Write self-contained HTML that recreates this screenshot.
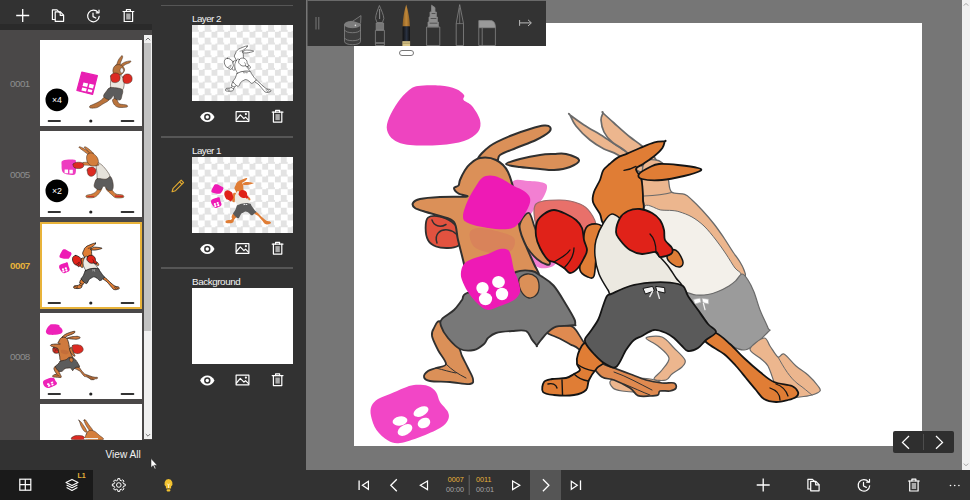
<!DOCTYPE html>
<html><head><meta charset="utf-8"><title>Animation Desk</title>
<style>
html,body{margin:0;padding:0;}
body{width:970px;height:500px;overflow:hidden;position:relative;background:#767676;font-family:"Liberation Sans",sans-serif;color:#fff;}
.abs{position:absolute;}
#topbar{left:0;top:0;width:306px;height:30px;background:#323232;}
#topgap{left:0;top:24px;width:152px;height:6px;background:#2a2a2a;}
#frames{left:0;top:30px;width:152px;height:410px;background:#4a4848;overflow:hidden;}
#layers{left:152px;top:0;width:154px;height:470px;background:#323232;}
#edge{display:none;}
#viewall{left:0;top:440px;width:306px;height:30px;background:#323232;}
#viewall span{position:absolute;left:105.5px;top:449.5px;top:9px;font-size:10.1px;line-height:12px;color:#f2f2f2;white-space:nowrap;}
#bottom{left:0;top:470px;width:970px;height:30px;background:#323232;}
#tabs{left:0;top:470px;width:93px;height:30px;background:#1a1a1a;}
#canvas{left:354px;top:23px;width:568px;height:423px;background:#fff;}
#brushbar{left:307px;top:0;width:239px;height:46px;background:#333;border-top:1px solid #6a6a6a;border-left:1px solid #555;box-sizing:border-box;}
#vscroll{left:962px;top:0;width:8px;height:470px;background:#f0f0f0;}
#artsvg{left:0;top:0;width:970px;height:500px;}
#uisvg{left:0;top:0;width:970px;height:500px;}
.thumb{position:absolute;left:40px;width:101.5px;height:86px;background:#fff;}
.fnum{position:absolute;left:10px;width:30px;font-size:9.8px;line-height:10px;color:#959595;letter-spacing:-0.5px;}
.sep{position:absolute;left:161px;width:132px;height:1.5px;background:#565656;}
.lthumb{position:absolute;left:192px;width:101px;height:75.5px;background:repeating-conic-gradient(#fff 0% 25%,#e3e3e3 0% 50%) 0 0/12.7px 12.7px;}
.llabel{position:absolute;left:192px;font-size:9.8px;line-height:11px;color:#f4f4f4;white-space:nowrap;letter-spacing:-0.55px;}
#fscroll{left:144px;top:35px;width:8px;height:404px;background:#f0f0f0;}
#fscrollthumb{left:144px;top:43px;width:7px;height:288px;background:#c2c2c2;}
#navbox{left:893px;top:431px;width:61px;height:22px;background:#2f2f2f;border-radius:2px;}
#playhl{left:530.4px;top:470px;width:30.4px;height:30px;background:#555;}
.tnum{position:absolute;font-size:7.2px;line-height:9px;white-space:nowrap;}
#brushsel{left:398.5px;top:50px;width:15px;height:6px;box-sizing:border-box;border:1px solid #777;border-radius:3px;background:#fff;}
</style></head><body>
<div class="abs" id="canvas"></div>
<svg class="abs" id="artsvg" viewBox="0 0 970 500">
<path d="M646.0 338.0C646.7 336.5 657.3 335.3 662.0 337.0C666.7 338.7 670.2 344.2 674.0 348.0C677.8 351.8 683.7 356.8 685.0 360.0C686.3 363.2 684.2 364.7 682.0 367.0C679.8 369.3 674.7 371.8 672.0 374.0C669.3 376.2 669.0 379.2 666.0 380.0C663.0 380.8 654.7 380.7 654.0 379.0C653.3 377.3 659.5 373.5 662.0 370.0C664.5 366.5 669.7 362.0 669.0 358.0C668.3 354.0 661.8 349.3 658.0 346.0C654.2 342.7 645.3 339.5 646.0 338.0Z" fill="#ecb68e" stroke="#6a6a6a" stroke-width="1.2" stroke-linejoin="round" stroke-linecap="round"/>
<path d="M612.0 380.0C616.5 378.3 632.0 377.7 640.0 378.0C648.0 378.3 656.3 380.0 660.0 382.0C663.7 384.0 665.3 388.3 662.0 390.0C658.7 391.7 646.7 391.8 640.0 392.0C633.3 392.2 626.5 391.7 622.0 391.0C617.5 390.3 614.7 389.8 613.0 388.0C611.3 386.2 607.5 381.7 612.0 380.0Z" fill="#ecb68e" stroke="#6a6a6a" stroke-width="1.2" stroke-linejoin="round" stroke-linecap="round"/>
<path d="M570.0 115.0C569.0 113.2 567.7 113.3 570.0 115.0C572.3 116.7 578.3 121.3 584.0 125.0C589.7 128.7 597.7 133.0 604.0 137.0C610.3 141.0 616.0 145.2 622.0 149.0C628.0 152.8 635.3 156.8 640.0 160.0C644.7 163.2 650.0 166.0 650.0 168.0C650.0 170.0 645.3 174.2 640.0 172.0C634.7 169.8 624.0 158.8 618.0 155.0C612.0 151.2 608.7 151.5 604.0 149.0C599.3 146.5 594.7 143.8 590.0 140.0C585.3 136.2 579.3 130.2 576.0 126.0C572.7 121.8 571.0 116.8 570.0 115.0Z" fill="#ecb68e" stroke="#6a6a6a" stroke-width="1.7" stroke-linejoin="round" stroke-linecap="round"/>
<path d="M603.0 113.0C603.3 111.8 601.2 111.3 603.0 113.0C604.8 114.7 609.5 119.0 614.0 123.0C618.5 127.0 625.3 133.2 630.0 137.0C634.7 140.8 637.7 142.2 642.0 146.0C646.3 149.8 655.0 156.0 656.0 160.0C657.0 164.0 653.3 171.7 648.0 170.0C642.7 168.3 630.0 154.7 624.0 150.0C618.0 145.3 615.3 145.0 612.0 142.0C608.7 139.0 605.8 135.7 604.0 132.0C602.2 128.3 601.2 123.2 601.0 120.0C600.8 116.8 602.7 114.2 603.0 113.0Z" fill="#ecb68e" stroke="#6a6a6a" stroke-width="1.7" stroke-linejoin="round" stroke-linecap="round"/>
<path d="M643.0 166.0C644.8 158.0 652.0 159.7 656.0 160.0C660.0 160.3 664.9 164.7 667.0 168.0C669.1 171.3 667.7 176.0 668.5 180.0C669.3 184.0 668.9 189.6 671.6 192.0C674.3 194.4 681.3 193.1 684.7 194.4C688.1 195.7 689.1 197.4 692.0 200.0C694.9 202.6 698.3 206.0 702.0 210.0C705.7 214.0 710.3 219.3 714.0 224.0C717.7 228.7 720.8 233.3 724.0 238.0C727.2 242.7 730.3 248.0 733.0 252.0C735.7 256.0 738.2 259.0 740.0 262.0C741.8 265.0 743.2 267.5 744.0 270.0C744.8 272.5 746.3 274.7 745.0 277.0C743.7 279.3 743.5 288.5 736.0 284.0C728.5 279.5 712.7 261.5 700.0 250.0C687.3 238.5 669.2 222.0 660.0 215.0C650.8 208.0 647.8 216.2 645.0 208.0C642.2 199.8 641.2 174.0 643.0 166.0Z" fill="#ecb68e" stroke="#6a6a6a" stroke-width="1.3" stroke-linejoin="round" stroke-linecap="round"/>
<path d="M644 196C654 195.5 664 194.5 671.6 192.5" fill="none" stroke="#6a6a6a" stroke-width="1.20" stroke-linecap="round"/>
<path d="M644.0 207.6C645.0 200.9 656.1 209.5 660.8 210.0C665.5 210.5 668.8 210.2 672.0 210.5C675.2 210.8 676.7 210.9 680.0 212.0C683.3 213.1 688.0 214.7 692.0 217.0C696.0 219.3 700.0 222.2 704.0 226.0C708.0 229.8 712.3 235.3 716.0 240.0C719.7 244.7 722.8 249.3 726.0 254.0C729.2 258.7 732.5 264.7 735.0 268.0C737.5 271.3 740.8 271.7 741.0 274.0C741.2 276.3 738.0 279.8 736.0 282.0C734.0 284.2 732.0 285.2 729.0 287.0C726.0 288.8 721.5 291.1 718.0 292.5C714.5 293.9 711.7 294.9 708.0 295.5C704.3 296.1 699.7 296.2 696.0 296.0C692.3 295.8 690.3 296.3 686.0 294.5C681.7 292.7 675.2 292.4 670.0 285.0C664.8 277.6 659.3 262.9 655.0 250.0C650.7 237.1 643.0 214.3 644.0 207.6Z" fill="#f3f0ea" stroke="#6a6a6a" stroke-width="1.0" stroke-linejoin="round" stroke-linecap="round"/>
<path d="M684.0 293.0C683.3 290.2 692.0 294.8 696.0 295.0C700.0 295.2 704.3 295.1 708.0 294.5C711.7 293.9 714.5 292.9 718.0 291.5C721.5 290.1 726.0 287.8 729.0 286.0C732.0 284.2 733.8 282.5 736.0 280.5C738.2 278.5 740.0 274.1 742.0 274.0C744.0 273.9 746.0 277.0 748.0 280.0C750.0 283.0 752.0 287.0 754.0 292.0C756.0 297.0 757.7 304.0 760.0 310.0C762.3 316.0 766.7 324.3 768.0 328.0C769.3 331.7 772.0 328.3 768.0 332.0C764.0 335.7 752.7 349.7 744.0 350.0C735.3 350.3 723.3 340.3 716.0 334.0C708.7 327.7 705.3 318.8 700.0 312.0C694.7 305.2 684.7 295.8 684.0 293.0Z" fill="#9b9b9b" stroke="#6a6a6a" stroke-width="1.2" stroke-linejoin="round" stroke-linecap="round"/>
<path d="M693.4 299.4L700 298.2L701 302.2L695 304Z M702 298.4L708.4 299.2L708.6 304L703 302.6Z" fill="#fff" stroke="#bbb" stroke-width="0.7" stroke-linejoin="round"/><path d="M703.4 303.4L705 309.6" stroke="#f4f4f4" stroke-width="1.3" stroke-linecap="round" fill="none"/>
<path d="M750.0 349.0C750.7 345.7 760.7 338.5 764.0 338.0C767.3 337.5 767.7 342.8 770.0 346.0C772.3 349.2 775.7 355.7 778.0 357.0C780.3 358.3 781.0 352.5 784.0 354.0C787.0 355.5 792.0 362.5 796.0 366.0C800.0 369.5 804.3 371.7 808.0 375.0C811.7 378.3 816.0 383.3 818.0 386.0C820.0 388.7 821.0 389.5 820.0 391.0C819.0 392.5 815.3 394.0 812.0 395.0C808.7 396.0 805.3 396.5 800.0 397.0C794.7 397.5 784.2 400.0 780.0 398.0C775.8 396.0 777.0 390.3 775.0 385.0C773.0 379.7 770.5 370.5 768.0 366.0C765.5 361.5 763.0 360.8 760.0 358.0C757.0 355.2 749.3 352.3 750.0 349.0Z" fill="#ecb68e" stroke="#6a6a6a" stroke-width="1.2" stroke-linejoin="round" stroke-linecap="round"/>
<path d="M778 357C784 368 790 378 798 384M798 384C804 388 808 392 812 395" fill="none" stroke="#6a6a6a" stroke-width="1.00" stroke-linecap="round"/>
<path d="M512.0 183.0C514.0 177.3 522.7 181.0 528.0 181.0C533.3 181.0 540.8 181.8 544.0 183.0C547.2 184.2 547.2 185.5 547.0 188.0C546.8 190.5 544.8 195.0 543.0 198.0C541.2 201.0 538.0 203.3 536.0 206.0C534.0 208.7 533.0 211.3 531.0 214.0C529.0 216.7 526.5 221.8 524.0 222.0C521.5 222.2 518.0 221.5 516.0 215.0C514.0 208.5 510.0 188.7 512.0 183.0Z" fill="#f27fd2"/>
<path d="M527.0 246.0C529.2 244.7 535.8 245.0 540.0 246.0C544.2 247.0 549.3 249.3 552.0 252.0C554.7 254.7 556.2 259.5 556.0 262.0C555.8 264.5 553.7 266.0 551.0 267.0C548.3 268.0 543.3 268.8 540.0 268.0C536.7 267.2 533.2 264.3 531.0 262.0C528.8 259.7 527.7 256.7 527.0 254.0C526.3 251.3 524.8 247.3 527.0 246.0Z" fill="#f27fd2"/>
<path d="M536.0 204.0C540.0 199.7 552.7 200.0 560.0 200.0C567.3 200.0 575.0 202.0 580.0 204.0C585.0 206.0 587.3 208.3 590.0 212.0C592.7 215.7 596.0 221.3 596.0 226.0C596.0 230.7 594.3 236.0 590.0 240.0C585.7 244.0 577.5 249.0 570.0 250.0C562.5 251.0 550.7 250.0 545.0 246.0C539.3 242.0 537.5 233.0 536.0 226.0C534.5 219.0 532.0 208.3 536.0 204.0Z" fill="#e8706a" stroke="#9a6a6a" stroke-width="1.2" stroke-linejoin="round" stroke-linecap="round"/>
<path d="M546.0 330.0C548.0 328.8 555.5 326.5 560.0 326.0C564.5 325.5 569.1 324.3 573.0 327.0C576.9 329.7 580.4 337.8 583.6 342.0C586.8 346.2 588.9 348.5 592.0 352.0C595.1 355.5 598.3 360.3 602.0 363.0C605.7 365.7 609.3 366.2 614.0 368.0C618.7 369.8 624.7 372.0 630.0 374.0C635.3 376.0 640.7 378.5 646.0 380.0C651.3 381.5 657.3 382.5 662.0 383.0C666.7 383.5 671.7 382.2 674.0 383.0C676.3 383.8 676.7 386.7 676.0 388.0C675.3 389.3 672.7 390.5 670.0 391.0C667.3 391.5 662.0 390.3 660.0 391.0C658.0 391.7 659.7 394.2 658.0 395.0C656.3 395.8 653.3 395.9 650.0 396.0C646.7 396.1 641.3 396.9 638.0 395.6C634.7 394.3 634.0 390.6 630.0 388.0C626.0 385.4 618.7 381.8 614.0 380.0C609.3 378.2 605.7 379.3 602.0 377.0C598.3 374.7 595.9 370.6 592.0 366.0C588.1 361.4 582.4 352.8 578.8 349.2C575.2 345.6 573.6 346.2 570.4 344.4C567.2 342.6 563.3 340.2 559.6 338.4C555.9 336.6 550.3 334.9 548.0 333.5C545.7 332.1 544.0 331.2 546.0 330.0Z" fill="#df8a50" stroke="#303030" stroke-width="1.7" stroke-linejoin="round" stroke-linecap="round"/>
<path d="M614 372C626 376 640 384 652 390M624 384C634 388 642 392 650 395" fill="none" stroke="#303030" stroke-width="1.00" stroke-linecap="round"/>
<path d="M441.0 322.0C437.0 319.0 435.5 325.7 434.0 328.0C432.5 330.3 431.3 332.3 432.0 336.0C432.7 339.7 435.7 345.3 438.0 350.0C440.3 354.7 446.3 361.0 446.0 364.0C445.7 367.0 439.0 366.8 436.0 368.0C433.0 369.2 430.0 369.5 428.0 371.0C426.0 372.5 423.7 375.3 424.0 377.0C424.3 378.7 425.7 380.2 430.0 381.0C434.3 381.8 443.3 381.5 450.0 382.0C456.7 382.5 466.2 384.5 470.0 384.0C473.8 383.5 473.3 381.7 473.0 379.0C472.7 376.3 469.8 371.8 468.0 368.0C466.2 364.2 463.7 359.7 462.0 356.0C460.3 352.3 461.5 351.7 458.0 346.0C454.5 340.3 445.0 325.0 441.0 322.0Z" fill="#db9058" stroke="#303030" stroke-width="1.8" stroke-linejoin="round" stroke-linecap="round"/>
<path d="M446 364C452 370 458 374 466 378M436 368C444 370 450 372 456 373" fill="none" stroke="#303030" stroke-width="1.00" stroke-linecap="round"/>
<path d="M428.0 217.6C425.6 219.5 425.6 224.3 425.6 228.0C425.6 231.7 426.3 236.9 428.0 240.0C429.7 243.1 432.7 245.2 436.0 246.5C439.3 247.8 444.3 248.1 448.0 248.0C451.7 247.9 455.8 247.3 458.0 246.0C460.2 244.7 460.8 242.7 461.0 240.0C461.2 237.3 460.5 233.0 459.0 230.0C457.5 227.0 455.2 224.2 452.0 222.0C448.8 219.8 444.0 217.2 440.0 216.5C436.0 215.8 430.4 215.7 428.0 217.6Z" fill="#e2523f" stroke="#303030" stroke-width="1.8" stroke-linejoin="round" stroke-linecap="round"/>
<path d="M432 220C434 226 440 228 446 224.5M437 243C434 234 440 229 448 230C455 231 459 236 459 243" fill="none" stroke="#303030" stroke-width="1.50" stroke-linecap="round"/>
<path d="M478.0 160.0C477.0 157.3 484.7 150.0 490.0 146.0C495.3 142.0 503.3 138.8 510.0 136.0C516.7 133.2 524.3 130.7 530.0 129.0C535.7 127.3 540.7 125.9 544.0 125.6C547.3 125.3 549.2 125.9 550.0 127.0C550.8 128.1 551.3 129.8 549.0 132.0C546.7 134.2 541.5 137.3 536.0 140.0C530.5 142.7 522.0 145.5 516.0 148.0C510.0 150.5 503.3 152.7 500.0 155.0C496.7 157.3 499.7 161.2 496.0 162.0C492.3 162.8 479.0 162.7 478.0 160.0Z" fill="#db9058" stroke="#303030" stroke-width="2.0" stroke-linejoin="round" stroke-linecap="round"/>
<path d="M506.0 164.0C506.0 162.7 514.3 160.5 520.0 159.0C525.7 157.5 534.3 155.8 540.0 155.0C545.7 154.2 549.7 154.2 554.0 154.0C558.3 153.8 561.8 153.0 566.0 154.0C570.2 155.0 578.3 157.8 579.0 160.0C579.7 162.2 574.2 165.3 570.0 167.0C565.8 168.7 559.0 169.7 554.0 170.0C549.0 170.3 545.7 169.5 540.0 169.0C534.3 168.5 525.7 167.8 520.0 167.0C514.3 166.2 506.0 165.3 506.0 164.0Z" fill="#db9058" stroke="#303030" stroke-width="2.0" stroke-linejoin="round" stroke-linecap="round"/>
<path d="M521.0 221.0C522.6 217.6 526.7 212.0 529.0 213.0C531.3 214.0 532.5 221.5 534.6 227.0C536.7 232.5 539.3 240.2 541.8 246.0C544.3 251.8 549.0 258.9 549.8 262.0C550.6 265.1 548.7 265.0 546.6 264.5C544.5 264.0 540.2 261.8 537.0 259.0C533.8 256.2 530.3 252.2 527.4 248.0C524.5 243.8 520.5 238.1 519.4 233.6C518.3 229.1 519.4 224.4 521.0 221.0Z" fill="#db9058" stroke="#303030" stroke-width="1.8" stroke-linejoin="round" stroke-linecap="round"/>
<path d="M480.0 158.0C475.7 158.7 472.6 161.8 470.0 164.0C467.4 166.2 466.2 168.3 464.5 171.0C462.8 173.7 461.0 177.6 460.0 180.0C459.0 182.4 459.5 184.2 458.5 185.5C457.5 186.8 454.0 186.7 454.0 188.0C454.0 189.3 456.3 192.1 458.5 193.5C460.7 194.9 470.1 195.9 467.0 196.5C463.9 197.1 447.8 196.6 440.0 197.0C432.2 197.4 424.5 198.0 420.0 199.0C415.5 200.0 413.8 201.5 413.0 203.0C412.2 204.5 412.8 206.5 415.0 208.0C417.2 209.5 421.8 210.7 426.0 212.0C430.2 213.3 435.3 214.3 440.0 216.0C444.7 217.7 451.0 218.0 454.0 222.0C457.0 226.0 456.3 233.0 458.0 240.0C459.7 247.0 462.2 256.0 464.0 264.0C465.8 272.0 463.0 282.0 469.0 288.0C475.0 294.0 488.5 298.3 500.0 300.0C511.5 301.7 531.3 301.7 538.0 298.0C544.7 294.3 540.7 283.7 540.0 278.0C539.3 272.3 536.3 269.3 534.0 264.0C531.7 258.7 528.3 251.7 526.0 246.0C523.7 240.3 521.7 237.7 520.0 230.0C518.3 222.3 518.0 209.7 516.0 200.0C514.0 190.3 511.3 178.7 508.0 172.0C504.7 165.3 500.7 162.3 496.0 160.0C491.3 157.7 484.3 157.3 480.0 158.0Z" fill="#db9058" stroke="#303030" stroke-width="2.0" stroke-linejoin="round" stroke-linecap="round"/>
<path d="M470.0 232.0C471.3 229.3 475.0 228.0 480.0 228.0C485.0 228.0 494.3 230.3 500.0 232.0C505.7 233.7 512.0 235.0 514.0 238.0C516.0 241.0 514.7 247.3 512.0 250.0C509.3 252.7 503.3 254.0 498.0 254.0C492.7 254.0 484.3 251.7 480.0 250.0C475.7 248.3 473.7 247.0 472.0 244.0C470.3 241.0 468.7 234.7 470.0 232.0Z" fill="#d9835a"/>
<path d="M467.0 293.0C473.3 290.3 491.8 287.5 500.0 284.0C508.2 280.5 510.7 274.2 516.0 272.0C521.3 269.8 527.8 270.3 532.0 271.0C536.2 271.7 537.4 273.6 541.0 276.0C544.6 278.4 549.3 280.8 553.5 285.5C557.7 290.2 562.5 298.8 566.0 304.5C569.5 310.2 573.0 316.1 574.5 319.5C576.0 322.9 574.9 324.1 575.0 325.0C575.1 325.9 576.2 324.9 575.0 325.0C573.8 325.1 571.2 325.5 568.0 325.8C564.8 326.1 559.4 325.5 556.0 326.6C552.6 327.7 550.1 330.2 547.6 332.4C545.1 334.6 542.8 337.8 541.0 340.0C539.2 342.2 537.5 344.7 536.8 345.6C536.1 346.5 537.6 346.6 536.8 345.6C536.0 344.6 533.8 342.0 532.0 339.6C530.2 337.2 529.3 332.4 526.0 331.0C522.7 329.6 517.0 330.7 512.0 331.0C507.0 331.3 500.0 331.8 496.0 333.0C492.0 334.2 490.0 336.2 488.0 338.0C486.0 339.8 486.3 342.0 484.0 344.0C481.7 346.0 478.0 349.2 474.0 350.0C470.0 350.8 464.3 351.0 460.0 349.0C455.7 347.0 451.2 341.8 448.0 338.0C444.8 334.2 442.0 329.2 441.0 326.0C440.0 322.8 439.8 321.7 442.0 319.0C444.2 316.3 450.7 313.2 454.0 310.0C457.3 306.8 459.8 302.8 462.0 300.0C464.2 297.2 460.7 295.7 467.0 293.0Z" fill="#787878" stroke="#303030" stroke-width="1.9" stroke-linejoin="round" stroke-linecap="round"/>
<path d="M519.0 279.0C518.0 281.8 519.3 287.8 521.0 291.0C522.7 294.2 526.3 297.5 529.0 298.0C531.7 298.5 535.3 296.2 537.0 294.0C538.7 291.8 539.2 287.8 539.0 285.0C538.8 282.2 538.0 278.8 536.0 277.0C534.0 275.2 529.8 273.7 527.0 274.0C524.2 274.3 520.0 276.2 519.0 279.0Z" fill="#db9058" stroke="#303030" stroke-width="1.3" stroke-linejoin="round" stroke-linecap="round"/>
<path d="M418.0 86.0C423.3 85.1 433.7 85.1 440.0 85.6C446.3 86.1 452.0 87.4 456.0 89.0C460.0 90.6 462.7 93.2 464.0 95.0C465.3 96.8 462.3 98.2 463.6 100.0C464.9 101.8 469.3 102.7 472.0 106.0C474.7 109.3 479.0 115.7 480.0 120.0C481.0 124.3 480.7 128.5 478.0 132.0C475.3 135.5 470.3 138.8 464.0 141.0C457.7 143.2 449.0 144.3 440.0 145.0C431.0 145.7 417.7 145.8 410.0 145.0C402.3 144.2 397.8 142.5 394.0 140.0C390.2 137.5 387.8 133.7 387.0 130.0C386.2 126.3 387.2 122.7 389.0 118.0C390.8 113.3 394.8 106.5 398.0 102.0C401.2 97.5 404.7 93.7 408.0 91.0C411.3 88.3 412.7 86.9 418.0 86.0Z" fill="#ee44c0"/>
<path d="M414.0 385.0C418.0 384.7 424.3 384.8 428.0 386.0C431.7 387.2 434.0 389.3 436.0 392.0C438.0 394.7 438.0 398.7 440.0 402.0C442.0 405.3 446.7 409.0 448.0 412.0C449.3 415.0 449.3 417.3 448.0 420.0C446.7 422.7 444.7 425.2 440.0 428.0C435.3 430.8 426.7 434.5 420.0 437.0C413.3 439.5 405.3 442.4 400.0 443.0C394.7 443.6 391.9 442.7 388.0 440.5C384.1 438.3 379.3 434.1 376.5 430.0C373.7 425.9 371.8 420.0 371.0 416.0C370.2 412.0 370.3 408.8 371.5 406.0C372.7 403.2 374.9 401.0 378.0 399.0C381.1 397.0 385.7 395.8 390.0 394.0C394.3 392.2 400.0 389.5 404.0 388.0C408.0 386.5 410.0 385.3 414.0 385.0Z" fill="#f246c6"/>
<ellipse cx="421" cy="411.6" rx="8" ry="4.5" fill="#fff" transform="rotate(-25 421 411.6)"/>
<ellipse cx="424" cy="423" rx="6.5" ry="5" fill="#fff" transform="rotate(-25 424 423)"/>
<ellipse cx="400" cy="421" rx="7.5" ry="4.5" fill="#fff" transform="rotate(-10 400 421)"/>
<ellipse cx="405" cy="430" rx="8" ry="5" fill="#fff" transform="rotate(-30 405 430)"/>
<path d="M700.0 330.0C701.7 328.5 711.0 330.7 716.0 333.0C721.0 335.3 725.3 339.8 730.0 344.0C734.7 348.2 739.0 353.3 744.0 358.0C749.0 362.7 755.0 368.0 760.0 372.0C765.0 376.0 768.7 379.7 774.0 382.0C779.3 384.3 788.0 384.3 792.0 386.0C796.0 387.7 797.3 390.2 798.0 392.0C798.7 393.8 797.7 395.7 796.0 397.0C794.3 398.3 791.3 399.2 788.0 400.0C784.7 400.8 780.0 402.2 776.0 402.0C772.0 401.8 767.3 401.0 764.0 399.0C760.7 397.0 759.0 393.5 756.0 390.0C753.0 386.5 749.3 382.0 746.0 378.0C742.7 374.0 739.7 370.0 736.0 366.0C732.3 362.0 729.0 358.0 724.0 354.0C719.0 350.0 710.0 346.0 706.0 342.0C702.0 338.0 698.3 331.5 700.0 330.0Z" fill="#e07d35" stroke="#141414" stroke-width="1.8" stroke-linejoin="round" stroke-linecap="round"/>
<path d="M776 384C782 386 786 390 788 396M770 388C776 390 780 394 780 400" fill="none" stroke="#141414" stroke-width="1.30" stroke-linecap="round"/>
<path d="M585.0 343.0C581.7 343.7 579.3 350.5 578.0 354.0C576.7 357.5 576.7 361.3 577.0 364.0C577.3 366.7 580.5 368.3 580.0 370.0C579.5 371.7 576.3 372.7 574.0 374.0C571.7 375.3 569.7 377.2 566.0 378.0C562.3 378.8 555.7 378.3 552.0 379.0C548.3 379.7 545.5 379.8 544.0 382.0C542.5 384.2 541.3 389.8 543.0 392.0C544.7 394.2 548.8 394.5 554.0 395.0C559.2 395.5 568.7 395.8 574.0 395.0C579.3 394.2 583.5 392.5 586.0 390.0C588.5 387.5 587.2 383.7 589.0 380.0C590.8 376.3 594.5 371.0 597.0 368.0C599.5 365.0 603.8 365.0 604.0 362.0C604.2 359.0 601.2 353.2 598.0 350.0C594.8 346.8 588.3 342.3 585.0 343.0Z" fill="#e07d35" stroke="#141414" stroke-width="1.8" stroke-linejoin="round" stroke-linecap="round"/>
<path d="M562 380L562.5 394.5M548 384C552 383 556 384 557 388M577 364C582 368 588 370 594 371M574 374C578 378 582 380 588 381" fill="none" stroke="#141414" stroke-width="1.40" stroke-linecap="round"/>
<path d="M664.8 141.3C666.5 141.1 665.2 140.2 664.8 141.3C664.4 142.4 664.1 145.6 662.4 148.0C660.7 150.4 657.6 153.3 654.4 156.0C651.2 158.7 646.3 161.8 643.2 164.0C640.1 166.2 636.4 166.7 636.0 169.0C635.6 171.3 639.9 174.8 641.0 178.0C642.1 181.2 642.2 184.3 642.5 188.0C642.8 191.7 643.1 196.0 643.0 200.0C642.9 204.0 645.8 207.7 642.0 212.0C638.2 216.3 626.3 224.0 620.0 226.0C613.7 228.0 607.3 226.0 604.0 224.0C600.7 222.0 601.8 217.7 600.0 214.0C598.2 210.3 594.0 205.7 593.0 202.0C592.0 198.3 592.8 195.7 594.0 192.0C595.2 188.3 598.5 183.6 600.0 180.0C601.5 176.4 601.6 173.1 603.2 170.4C604.8 167.7 607.2 166.1 609.6 164.0C612.0 161.9 614.7 159.3 617.6 157.6C620.5 155.9 623.5 155.2 627.2 153.6C630.9 152.0 635.5 149.9 640.0 148.0C644.5 146.1 650.3 143.5 654.4 142.4C658.5 141.3 663.1 141.5 664.8 141.3Z" fill="#e07d35" stroke="#141414" stroke-width="1.8" stroke-linejoin="round" stroke-linecap="round"/>
<path d="M624 170.4C628 170 632 168.6 636 166.4" fill="none" stroke="#141414" stroke-width="1.30" stroke-linecap="round"/>
<path d="M639.0 174.0C640.3 172.0 646.7 168.7 650.0 167.0C653.3 165.3 654.3 164.3 659.0 164.0C663.7 163.7 671.5 164.3 678.0 165.0C684.5 165.7 694.3 167.0 698.0 168.0C701.7 169.0 702.3 169.7 700.0 171.0C697.7 172.3 690.3 174.5 684.0 176.0C677.7 177.5 669.0 179.5 662.0 180.0C655.0 180.5 645.8 180.0 642.0 179.0C638.2 178.0 637.7 176.0 639.0 174.0Z" fill="#e07d35" stroke="#141414" stroke-width="1.8" stroke-linejoin="round" stroke-linecap="round"/>
<path d="M586.0 228.0C588.5 223.7 594.0 223.7 597.0 224.0C600.0 224.3 603.8 226.7 604.0 230.0C604.2 233.3 599.3 239.3 598.0 244.0C596.7 248.7 596.7 252.7 596.0 258.0C595.3 263.3 595.3 272.8 594.0 276.0C592.7 279.2 590.3 278.0 588.0 277.0C585.7 276.0 581.0 274.5 580.0 270.0C579.0 265.5 581.0 257.0 582.0 250.0C583.0 243.0 583.5 232.3 586.0 228.0Z" fill="#e07d35" stroke="#141414" stroke-width="1.6" stroke-linejoin="round" stroke-linecap="round"/>
<path d="M604.0 222.0C606.7 217.7 609.0 214.3 612.0 214.0C615.0 213.7 617.3 216.3 622.0 220.0C626.7 223.7 633.7 229.8 640.0 236.0C646.3 242.2 655.3 252.0 660.0 257.0C664.7 262.0 665.3 262.5 668.0 266.0C670.7 269.5 673.7 274.7 676.0 278.0C678.3 281.3 683.0 285.0 682.0 286.0C681.0 287.0 675.3 284.3 670.0 284.0C664.7 283.7 656.7 283.3 650.0 284.0C643.3 284.7 636.3 286.2 630.0 288.0C623.7 289.8 615.7 294.7 612.0 295.0C608.3 295.3 610.2 293.5 608.0 290.0C605.8 286.5 601.2 279.7 599.0 274.0C596.8 268.3 595.5 261.7 595.0 256.0C594.5 250.3 594.5 245.7 596.0 240.0C597.5 234.3 601.3 226.3 604.0 222.0Z" fill="#ece9e1" stroke="#141414" stroke-width="1.5" stroke-linejoin="round" stroke-linecap="round"/>
<path d="M607.0 296.0C608.5 293.9 608.2 295.3 612.0 293.6C615.8 291.9 623.7 287.8 630.0 286.0C636.3 284.2 643.3 283.2 650.0 282.6C656.7 282.0 664.5 282.0 670.0 282.6C675.5 283.2 680.0 283.8 683.0 286.0C686.0 288.2 685.5 292.0 688.0 296.0C690.5 300.0 694.7 305.3 698.0 310.0C701.3 314.7 705.0 320.3 708.0 324.0C711.0 327.7 716.3 329.3 716.0 332.0C715.7 334.7 709.0 337.3 706.0 340.0C703.0 342.7 701.0 346.2 698.0 348.0C695.0 349.8 690.7 351.3 688.0 351.0C685.3 350.7 684.3 348.2 682.0 346.0C679.7 343.8 676.7 340.2 674.0 338.0C671.3 335.8 669.3 334.3 666.0 333.0C662.7 331.7 658.0 329.5 654.0 330.0C650.0 330.5 645.3 334.3 642.0 336.0C638.7 337.7 636.7 337.7 634.0 340.0C631.3 342.3 629.0 345.5 626.0 350.0C623.0 354.5 619.7 364.8 616.0 367.0C612.3 369.2 607.7 365.2 604.0 363.0C600.3 360.8 597.0 357.2 594.0 354.0C591.0 350.8 587.5 346.5 586.0 344.0C584.5 341.5 584.3 341.0 585.0 339.0C585.7 337.0 587.8 335.2 590.0 332.0C592.2 328.8 595.8 324.3 598.0 320.0C600.2 315.7 601.5 310.0 603.0 306.0C604.5 302.0 605.5 298.1 607.0 296.0Z" fill="#5a5a5a" stroke="#141414" stroke-width="1.8" stroke-linejoin="round" stroke-linecap="round"/>
<path d="M643 288.4L652.6 286.4L654.4 290.8L645.4 294Z M655.6 286.4L664.6 287.6L665 293L656.8 291.2Z" fill="#f4f4f4" stroke="#141414" stroke-width="1.00" stroke-linejoin="round"/><path d="M652.4 291.6L649.8 296.6M657.4 291.6L659.4 298.4" stroke="#e8e8e8" stroke-width="1.40" stroke-linecap="round" fill="none"/>
<path d="M667.0 257.0C667.0 254.7 670.2 250.8 672.0 250.0C673.8 249.2 676.2 250.0 678.0 252.0C679.8 254.0 682.7 259.5 683.0 262.0C683.3 264.5 681.8 266.7 680.0 267.0C678.2 267.3 674.2 265.7 672.0 264.0C669.8 262.3 667.0 259.3 667.0 257.0Z" fill="#e07d35" stroke="#141414" stroke-width="1.5" stroke-linejoin="round" stroke-linecap="round"/>
<path d="M620.0 218.0C622.0 214.5 624.7 212.5 628.0 211.0C631.3 209.5 636.0 208.7 640.0 209.0C644.0 209.3 648.7 211.2 652.0 213.0C655.3 214.8 658.0 217.2 660.0 220.0C662.0 222.8 663.2 226.7 664.0 230.0C664.8 233.3 663.7 237.0 665.0 240.0C666.3 243.0 671.0 245.7 672.0 248.0C673.0 250.3 673.0 252.5 671.0 254.0C669.0 255.5 662.5 257.3 660.0 257.0C657.5 256.7 659.0 252.5 656.0 252.0C653.0 251.5 646.3 254.3 642.0 254.0C637.7 253.7 633.7 252.3 630.0 250.0C626.3 247.7 622.3 243.0 620.0 240.0C617.7 237.0 616.0 235.7 616.0 232.0C616.0 228.3 618.0 221.5 620.0 218.0Z" fill="#e02219" stroke="#141414" stroke-width="1.8" stroke-linejoin="round" stroke-linecap="round"/>
<path d="M656 252C656 244 654 238 650 234" fill="none" stroke="#141414" stroke-width="1.30" stroke-linecap="round"/>
<path d="M554.0 210.0C557.7 210.0 562.3 212.3 566.0 214.0C569.7 215.7 573.3 217.7 576.0 220.0C578.7 222.3 580.7 224.7 582.0 228.0C583.3 231.3 583.2 236.3 584.0 240.0C584.8 243.7 587.0 247.0 587.0 250.0C587.0 253.0 585.5 255.0 584.0 258.0C582.5 261.0 580.3 265.5 578.0 268.0C575.7 270.5 572.3 273.0 570.0 273.0C567.7 273.0 566.7 269.8 564.0 268.0C561.3 266.2 556.7 263.3 554.0 262.0C551.3 260.7 550.3 262.3 548.0 260.0C545.7 257.7 542.0 252.0 540.0 248.0C538.0 244.0 536.5 240.3 536.0 236.0C535.5 231.7 535.7 225.7 537.0 222.0C538.3 218.3 541.2 216.0 544.0 214.0C546.8 212.0 550.3 210.0 554.0 210.0Z" fill="#e02219" stroke="#141414" stroke-width="1.8" stroke-linejoin="round" stroke-linecap="round"/>
<path d="M564 268C570 262 574 256 574 248M554 262C560 258 566 256 570 250" fill="none" stroke="#141414" stroke-width="1.30" stroke-linecap="round"/>
<path d="M482.0 178.0C484.3 176.3 487.0 175.6 490.0 175.6C493.0 175.6 496.0 176.3 500.0 178.0C504.0 179.7 510.0 183.8 514.0 186.0C518.0 188.2 521.3 189.0 524.0 191.0C526.7 193.0 529.3 195.2 530.0 198.0C530.7 200.8 530.0 203.7 528.0 208.0C526.0 212.3 521.3 220.5 518.0 224.0C514.7 227.5 513.0 228.3 508.0 229.0C503.0 229.7 494.7 229.0 488.0 228.0C481.3 227.0 472.2 225.0 468.0 223.0C463.8 221.0 463.0 219.8 463.0 216.0C463.0 212.2 465.8 205.0 468.0 200.0C470.2 195.0 473.7 189.7 476.0 186.0C478.3 182.3 479.7 179.7 482.0 178.0Z" fill="#ee1ab5"/>
<path d="M500.0 249.0C503.3 248.3 506.2 248.8 508.0 250.0C509.8 251.2 510.0 252.7 511.0 256.0C512.0 259.3 512.8 266.0 514.0 270.0C515.2 274.0 517.0 276.3 518.0 280.0C519.0 283.7 520.7 288.7 520.0 292.0C519.3 295.3 517.3 297.7 514.0 300.0C510.7 302.3 504.3 304.3 500.0 306.0C495.7 307.7 491.7 310.3 488.0 310.0C484.3 309.7 481.3 307.0 478.0 304.0C474.7 301.0 470.7 296.0 468.0 292.0C465.3 288.0 463.2 283.3 462.0 280.0C460.8 276.7 460.7 274.7 461.0 272.0C461.3 269.3 462.2 266.2 464.0 264.0C465.8 261.8 468.0 260.7 472.0 259.0C476.0 257.3 483.3 255.7 488.0 254.0C492.7 252.3 496.7 249.7 500.0 249.0Z" fill="#ee1ab5"/>
<ellipse cx="482.5" cy="288" rx="6.2" ry="6" fill="#fff"/>
<ellipse cx="485.5" cy="299" rx="6.6" ry="6.2" fill="#fff"/>
<ellipse cx="498.5" cy="282" rx="6.4" ry="6" fill="#fff"/>
<ellipse cx="502" cy="294" rx="6.2" ry="6.2" fill="#fff"/>
</svg>
<div class="abs" id="brushbar"></div>
<div class="abs" id="brushsel"></div>
<div class="abs" id="vscroll"></div>
<div class="abs" id="navbox"></div>
<div class="abs" id="topbar"></div>
<div class="abs" id="layers">
</div>
<div class="sep" style="top:4.5px"></div>
<div class="llabel" style="top:13px">Layer 2</div>
<div class="lthumb" style="top:25px"></div>
<div class="sep" style="top:136px"></div>
<div class="llabel" style="top:144.8px">Layer 1</div>
<div class="lthumb" style="top:157px"></div>
<div class="sep" style="top:267px"></div>
<div class="llabel" style="top:276.2px;letter-spacing:-0.4px">Background</div>
<div class="lthumb" style="top:288px;background:#fff"></div>
<div class="abs" id="edge"></div>
<div class="abs" id="topgap"></div>
<div class="abs" id="frames">
<div class="fnum" style="top:49px;color:#8e8e8e;font-weight:normal">0001</div>
<div class="fnum" style="top:140px;color:#8e8e8e;font-weight:normal">0005</div>
<div class="fnum" style="top:231px;color:#e8b33a;font-weight:bold">0007</div>
<div class="fnum" style="top:322px;color:#8e8e8e;font-weight:normal">0008</div>
<div class="thumb" style="top:10px"></div>
<div class="thumb" style="top:101px"></div>
<div class="thumb" style="top:192px;box-sizing:border-box;border:2px solid #e8b33a;left:39.5px;width:102.5px;height:87.5px;top:191.5px"></div>
<div class="thumb" style="top:283px"></div>
<div class="thumb" style="top:374px"></div>
</div>
<div class="abs" id="fscroll"></div>
<div class="abs" id="fscrollthumb"></div>
<div class="abs" id="viewall"><span>View All</span></div>
<div class="abs" id="bottom"></div>
<div class="abs" id="tabs"></div>
<div class="abs" id="playhl"></div>
<div class="tnum" style="left:447.8px;top:474.5px;color:#e8b33a">0007</div>
<div class="tnum" style="left:446px;top:485.2px;color:#a8a8a8">00:00</div>
<div class="tnum" style="left:476px;top:474.5px;color:#e8b33a">0011</div>
<div class="tnum" style="left:476px;top:485.2px;color:#a8a8a8">00:01</div>
<svg class="abs" id="uisvg" viewBox="0 0 970 500">
<g transform="translate(40 222) scale(0.1787) translate(-354 -23)"><path d="M700.0 330.0C701.7 328.5 711.0 330.7 716.0 333.0C721.0 335.3 725.3 339.8 730.0 344.0C734.7 348.2 739.0 353.3 744.0 358.0C749.0 362.7 755.0 368.0 760.0 372.0C765.0 376.0 768.7 379.7 774.0 382.0C779.3 384.3 788.0 384.3 792.0 386.0C796.0 387.7 797.3 390.2 798.0 392.0C798.7 393.8 797.7 395.7 796.0 397.0C794.3 398.3 791.3 399.2 788.0 400.0C784.7 400.8 780.0 402.2 776.0 402.0C772.0 401.8 767.3 401.0 764.0 399.0C760.7 397.0 759.0 393.5 756.0 390.0C753.0 386.5 749.3 382.0 746.0 378.0C742.7 374.0 739.7 370.0 736.0 366.0C732.3 362.0 729.0 358.0 724.0 354.0C719.0 350.0 710.0 346.0 706.0 342.0C702.0 338.0 698.3 331.5 700.0 330.0Z" fill="#e07d35" stroke="#141414" stroke-width="3.9600000000000004" stroke-linejoin="round" stroke-linecap="round"/>
<path d="M776 384C782 386 786 390 788 396M770 388C776 390 780 394 780 400" fill="none" stroke="#141414" stroke-width="2.86" stroke-linecap="round"/>
<path d="M585.0 343.0C581.7 343.7 579.3 350.5 578.0 354.0C576.7 357.5 576.7 361.3 577.0 364.0C577.3 366.7 580.5 368.3 580.0 370.0C579.5 371.7 576.3 372.7 574.0 374.0C571.7 375.3 569.7 377.2 566.0 378.0C562.3 378.8 555.7 378.3 552.0 379.0C548.3 379.7 545.5 379.8 544.0 382.0C542.5 384.2 541.3 389.8 543.0 392.0C544.7 394.2 548.8 394.5 554.0 395.0C559.2 395.5 568.7 395.8 574.0 395.0C579.3 394.2 583.5 392.5 586.0 390.0C588.5 387.5 587.2 383.7 589.0 380.0C590.8 376.3 594.5 371.0 597.0 368.0C599.5 365.0 603.8 365.0 604.0 362.0C604.2 359.0 601.2 353.2 598.0 350.0C594.8 346.8 588.3 342.3 585.0 343.0Z" fill="#e07d35" stroke="#141414" stroke-width="3.9600000000000004" stroke-linejoin="round" stroke-linecap="round"/>
<path d="M562 380L562.5 394.5M548 384C552 383 556 384 557 388M577 364C582 368 588 370 594 371M574 374C578 378 582 380 588 381" fill="none" stroke="#141414" stroke-width="3.08" stroke-linecap="round"/>
<path d="M664.8 141.3C666.5 141.1 665.2 140.2 664.8 141.3C664.4 142.4 664.1 145.6 662.4 148.0C660.7 150.4 657.6 153.3 654.4 156.0C651.2 158.7 646.3 161.8 643.2 164.0C640.1 166.2 636.4 166.7 636.0 169.0C635.6 171.3 639.9 174.8 641.0 178.0C642.1 181.2 642.2 184.3 642.5 188.0C642.8 191.7 643.1 196.0 643.0 200.0C642.9 204.0 645.8 207.7 642.0 212.0C638.2 216.3 626.3 224.0 620.0 226.0C613.7 228.0 607.3 226.0 604.0 224.0C600.7 222.0 601.8 217.7 600.0 214.0C598.2 210.3 594.0 205.7 593.0 202.0C592.0 198.3 592.8 195.7 594.0 192.0C595.2 188.3 598.5 183.6 600.0 180.0C601.5 176.4 601.6 173.1 603.2 170.4C604.8 167.7 607.2 166.1 609.6 164.0C612.0 161.9 614.7 159.3 617.6 157.6C620.5 155.9 623.5 155.2 627.2 153.6C630.9 152.0 635.5 149.9 640.0 148.0C644.5 146.1 650.3 143.5 654.4 142.4C658.5 141.3 663.1 141.5 664.8 141.3Z" fill="#e07d35" stroke="#141414" stroke-width="3.9600000000000004" stroke-linejoin="round" stroke-linecap="round"/>
<path d="M624 170.4C628 170 632 168.6 636 166.4" fill="none" stroke="#141414" stroke-width="2.86" stroke-linecap="round"/>
<path d="M639.0 174.0C640.3 172.0 646.7 168.7 650.0 167.0C653.3 165.3 654.3 164.3 659.0 164.0C663.7 163.7 671.5 164.3 678.0 165.0C684.5 165.7 694.3 167.0 698.0 168.0C701.7 169.0 702.3 169.7 700.0 171.0C697.7 172.3 690.3 174.5 684.0 176.0C677.7 177.5 669.0 179.5 662.0 180.0C655.0 180.5 645.8 180.0 642.0 179.0C638.2 178.0 637.7 176.0 639.0 174.0Z" fill="#e07d35" stroke="#141414" stroke-width="3.9600000000000004" stroke-linejoin="round" stroke-linecap="round"/>
<path d="M586.0 228.0C588.5 223.7 594.0 223.7 597.0 224.0C600.0 224.3 603.8 226.7 604.0 230.0C604.2 233.3 599.3 239.3 598.0 244.0C596.7 248.7 596.7 252.7 596.0 258.0C595.3 263.3 595.3 272.8 594.0 276.0C592.7 279.2 590.3 278.0 588.0 277.0C585.7 276.0 581.0 274.5 580.0 270.0C579.0 265.5 581.0 257.0 582.0 250.0C583.0 243.0 583.5 232.3 586.0 228.0Z" fill="#e07d35" stroke="#141414" stroke-width="3.5200000000000005" stroke-linejoin="round" stroke-linecap="round"/>
<path d="M604.0 222.0C606.7 217.7 609.0 214.3 612.0 214.0C615.0 213.7 617.3 216.3 622.0 220.0C626.7 223.7 633.7 229.8 640.0 236.0C646.3 242.2 655.3 252.0 660.0 257.0C664.7 262.0 665.3 262.5 668.0 266.0C670.7 269.5 673.7 274.7 676.0 278.0C678.3 281.3 683.0 285.0 682.0 286.0C681.0 287.0 675.3 284.3 670.0 284.0C664.7 283.7 656.7 283.3 650.0 284.0C643.3 284.7 636.3 286.2 630.0 288.0C623.7 289.8 615.7 294.7 612.0 295.0C608.3 295.3 610.2 293.5 608.0 290.0C605.8 286.5 601.2 279.7 599.0 274.0C596.8 268.3 595.5 261.7 595.0 256.0C594.5 250.3 594.5 245.7 596.0 240.0C597.5 234.3 601.3 226.3 604.0 222.0Z" fill="#ece9e1" stroke="#141414" stroke-width="3.3000000000000003" stroke-linejoin="round" stroke-linecap="round"/>
<path d="M607.0 296.0C608.5 293.9 608.2 295.3 612.0 293.6C615.8 291.9 623.7 287.8 630.0 286.0C636.3 284.2 643.3 283.2 650.0 282.6C656.7 282.0 664.5 282.0 670.0 282.6C675.5 283.2 680.0 283.8 683.0 286.0C686.0 288.2 685.5 292.0 688.0 296.0C690.5 300.0 694.7 305.3 698.0 310.0C701.3 314.7 705.0 320.3 708.0 324.0C711.0 327.7 716.3 329.3 716.0 332.0C715.7 334.7 709.0 337.3 706.0 340.0C703.0 342.7 701.0 346.2 698.0 348.0C695.0 349.8 690.7 351.3 688.0 351.0C685.3 350.7 684.3 348.2 682.0 346.0C679.7 343.8 676.7 340.2 674.0 338.0C671.3 335.8 669.3 334.3 666.0 333.0C662.7 331.7 658.0 329.5 654.0 330.0C650.0 330.5 645.3 334.3 642.0 336.0C638.7 337.7 636.7 337.7 634.0 340.0C631.3 342.3 629.0 345.5 626.0 350.0C623.0 354.5 619.7 364.8 616.0 367.0C612.3 369.2 607.7 365.2 604.0 363.0C600.3 360.8 597.0 357.2 594.0 354.0C591.0 350.8 587.5 346.5 586.0 344.0C584.5 341.5 584.3 341.0 585.0 339.0C585.7 337.0 587.8 335.2 590.0 332.0C592.2 328.8 595.8 324.3 598.0 320.0C600.2 315.7 601.5 310.0 603.0 306.0C604.5 302.0 605.5 298.1 607.0 296.0Z" fill="#5a5a5a" stroke="#141414" stroke-width="3.9600000000000004" stroke-linejoin="round" stroke-linecap="round"/>
<path d="M643 288.4L652.6 286.4L654.4 290.8L645.4 294Z M655.6 286.4L664.6 287.6L665 293L656.8 291.2Z" fill="#f4f4f4" stroke="#141414" stroke-width="2.20" stroke-linejoin="round"/><path d="M652.4 291.6L649.8 296.6M657.4 291.6L659.4 298.4" stroke="#e8e8e8" stroke-width="3.08" stroke-linecap="round" fill="none"/>
<path d="M667.0 257.0C667.0 254.7 670.2 250.8 672.0 250.0C673.8 249.2 676.2 250.0 678.0 252.0C679.8 254.0 682.7 259.5 683.0 262.0C683.3 264.5 681.8 266.7 680.0 267.0C678.2 267.3 674.2 265.7 672.0 264.0C669.8 262.3 667.0 259.3 667.0 257.0Z" fill="#e07d35" stroke="#141414" stroke-width="3.3000000000000003" stroke-linejoin="round" stroke-linecap="round"/>
<path d="M620.0 218.0C622.0 214.5 624.7 212.5 628.0 211.0C631.3 209.5 636.0 208.7 640.0 209.0C644.0 209.3 648.7 211.2 652.0 213.0C655.3 214.8 658.0 217.2 660.0 220.0C662.0 222.8 663.2 226.7 664.0 230.0C664.8 233.3 663.7 237.0 665.0 240.0C666.3 243.0 671.0 245.7 672.0 248.0C673.0 250.3 673.0 252.5 671.0 254.0C669.0 255.5 662.5 257.3 660.0 257.0C657.5 256.7 659.0 252.5 656.0 252.0C653.0 251.5 646.3 254.3 642.0 254.0C637.7 253.7 633.7 252.3 630.0 250.0C626.3 247.7 622.3 243.0 620.0 240.0C617.7 237.0 616.0 235.7 616.0 232.0C616.0 228.3 618.0 221.5 620.0 218.0Z" fill="#e02219" stroke="#141414" stroke-width="3.9600000000000004" stroke-linejoin="round" stroke-linecap="round"/>
<path d="M656 252C656 244 654 238 650 234" fill="none" stroke="#141414" stroke-width="2.86" stroke-linecap="round"/>
<path d="M554.0 210.0C557.7 210.0 562.3 212.3 566.0 214.0C569.7 215.7 573.3 217.7 576.0 220.0C578.7 222.3 580.7 224.7 582.0 228.0C583.3 231.3 583.2 236.3 584.0 240.0C584.8 243.7 587.0 247.0 587.0 250.0C587.0 253.0 585.5 255.0 584.0 258.0C582.5 261.0 580.3 265.5 578.0 268.0C575.7 270.5 572.3 273.0 570.0 273.0C567.7 273.0 566.7 269.8 564.0 268.0C561.3 266.2 556.7 263.3 554.0 262.0C551.3 260.7 550.3 262.3 548.0 260.0C545.7 257.7 542.0 252.0 540.0 248.0C538.0 244.0 536.5 240.3 536.0 236.0C535.5 231.7 535.7 225.7 537.0 222.0C538.3 218.3 541.2 216.0 544.0 214.0C546.8 212.0 550.3 210.0 554.0 210.0Z" fill="#e02219" stroke="#141414" stroke-width="3.9600000000000004" stroke-linejoin="round" stroke-linecap="round"/>
<path d="M564 268C570 262 574 256 574 248M554 262C560 258 566 256 570 250" fill="none" stroke="#141414" stroke-width="2.86" stroke-linecap="round"/><path d="M482.0 178.0C484.3 176.3 487.0 175.6 490.0 175.6C493.0 175.6 496.0 176.3 500.0 178.0C504.0 179.7 510.0 183.8 514.0 186.0C518.0 188.2 521.3 189.0 524.0 191.0C526.7 193.0 529.3 195.2 530.0 198.0C530.7 200.8 530.0 203.7 528.0 208.0C526.0 212.3 521.3 220.5 518.0 224.0C514.7 227.5 513.0 228.3 508.0 229.0C503.0 229.7 494.7 229.0 488.0 228.0C481.3 227.0 472.2 225.0 468.0 223.0C463.8 221.0 463.0 219.8 463.0 216.0C463.0 212.2 465.8 205.0 468.0 200.0C470.2 195.0 473.7 189.7 476.0 186.0C478.3 182.3 479.7 179.7 482.0 178.0Z" fill="#ee1ab5"/>
<path d="M500.0 249.0C503.3 248.3 506.2 248.8 508.0 250.0C509.8 251.2 510.0 252.7 511.0 256.0C512.0 259.3 512.8 266.0 514.0 270.0C515.2 274.0 517.0 276.3 518.0 280.0C519.0 283.7 520.7 288.7 520.0 292.0C519.3 295.3 517.3 297.7 514.0 300.0C510.7 302.3 504.3 304.3 500.0 306.0C495.7 307.7 491.7 310.3 488.0 310.0C484.3 309.7 481.3 307.0 478.0 304.0C474.7 301.0 470.7 296.0 468.0 292.0C465.3 288.0 463.2 283.3 462.0 280.0C460.8 276.7 460.7 274.7 461.0 272.0C461.3 269.3 462.2 266.2 464.0 264.0C465.8 261.8 468.0 260.7 472.0 259.0C476.0 257.3 483.3 255.7 488.0 254.0C492.7 252.3 496.7 249.7 500.0 249.0Z" fill="#ee1ab5"/>
<ellipse cx="482.5" cy="288" rx="6.2" ry="6" fill="#fff"/>
<ellipse cx="485.5" cy="299" rx="6.6" ry="6.2" fill="#fff"/>
<ellipse cx="498.5" cy="282" rx="6.4" ry="6" fill="#fff"/>
<ellipse cx="502" cy="294" rx="6.2" ry="6.2" fill="#fff"/></g>
<g transform="translate(40 313) scale(0.1787) translate(-354 -23)"><path d="M536.0 204.0C540.0 199.7 552.7 200.0 560.0 200.0C567.3 200.0 575.0 202.0 580.0 204.0C585.0 206.0 587.3 208.3 590.0 212.0C592.7 215.7 596.0 221.3 596.0 226.0C596.0 230.7 594.3 236.0 590.0 240.0C585.7 244.0 577.5 249.0 570.0 250.0C562.5 251.0 550.7 250.0 545.0 246.0C539.3 242.0 537.5 233.0 536.0 226.0C534.5 219.0 532.0 208.3 536.0 204.0Z" fill="#dc2a22" stroke="#3a2a20" stroke-width="2.64" stroke-linejoin="round" stroke-linecap="round"/><path d="M546.0 330.0C548.0 328.8 555.5 326.5 560.0 326.0C564.5 325.5 569.1 324.3 573.0 327.0C576.9 329.7 580.4 337.8 583.6 342.0C586.8 346.2 588.9 348.5 592.0 352.0C595.1 355.5 598.3 360.3 602.0 363.0C605.7 365.7 609.3 366.2 614.0 368.0C618.7 369.8 624.7 372.0 630.0 374.0C635.3 376.0 640.7 378.5 646.0 380.0C651.3 381.5 657.3 382.5 662.0 383.0C666.7 383.5 671.7 382.2 674.0 383.0C676.3 383.8 676.7 386.7 676.0 388.0C675.3 389.3 672.7 390.5 670.0 391.0C667.3 391.5 662.0 390.3 660.0 391.0C658.0 391.7 659.7 394.2 658.0 395.0C656.3 395.8 653.3 395.9 650.0 396.0C646.7 396.1 641.3 396.9 638.0 395.6C634.7 394.3 634.0 390.6 630.0 388.0C626.0 385.4 618.7 381.8 614.0 380.0C609.3 378.2 605.7 379.3 602.0 377.0C598.3 374.7 595.9 370.6 592.0 366.0C588.1 361.4 582.4 352.8 578.8 349.2C575.2 345.6 573.6 346.2 570.4 344.4C567.2 342.6 563.3 340.2 559.6 338.4C555.9 336.6 550.3 334.9 548.0 333.5C545.7 332.1 544.0 331.2 546.0 330.0Z" fill="#cf7a3e" stroke="#3a2a20" stroke-width="3.74" stroke-linejoin="round" stroke-linecap="round"/>
<path d="M614 372C626 376 640 384 652 390M624 384C634 388 642 392 650 395" fill="none" stroke="#3a2a20" stroke-width="2.20" stroke-linecap="round"/>
<path d="M441.0 322.0C437.0 319.0 435.5 325.7 434.0 328.0C432.5 330.3 431.3 332.3 432.0 336.0C432.7 339.7 435.7 345.3 438.0 350.0C440.3 354.7 446.3 361.0 446.0 364.0C445.7 367.0 439.0 366.8 436.0 368.0C433.0 369.2 430.0 369.5 428.0 371.0C426.0 372.5 423.7 375.3 424.0 377.0C424.3 378.7 425.7 380.2 430.0 381.0C434.3 381.8 443.3 381.5 450.0 382.0C456.7 382.5 466.2 384.5 470.0 384.0C473.8 383.5 473.3 381.7 473.0 379.0C472.7 376.3 469.8 371.8 468.0 368.0C466.2 364.2 463.7 359.7 462.0 356.0C460.3 352.3 461.5 351.7 458.0 346.0C454.5 340.3 445.0 325.0 441.0 322.0Z" fill="#cf7a3e" stroke="#3a2a20" stroke-width="3.9600000000000004" stroke-linejoin="round" stroke-linecap="round"/>
<path d="M446 364C452 370 458 374 466 378M436 368C444 370 450 372 456 373" fill="none" stroke="#3a2a20" stroke-width="2.20" stroke-linecap="round"/>
<path d="M428.0 217.6C425.6 219.5 425.6 224.3 425.6 228.0C425.6 231.7 426.3 236.9 428.0 240.0C429.7 243.1 432.7 245.2 436.0 246.5C439.3 247.8 444.3 248.1 448.0 248.0C451.7 247.9 455.8 247.3 458.0 246.0C460.2 244.7 460.8 242.7 461.0 240.0C461.2 237.3 460.5 233.0 459.0 230.0C457.5 227.0 455.2 224.2 452.0 222.0C448.8 219.8 444.0 217.2 440.0 216.5C436.0 215.8 430.4 215.7 428.0 217.6Z" fill="#dc2a22" stroke="#3a2a20" stroke-width="3.9600000000000004" stroke-linejoin="round" stroke-linecap="round"/>
<path d="M432 220C434 226 440 228 446 224.5M437 243C434 234 440 229 448 230C455 231 459 236 459 243" fill="none" stroke="#3a2a20" stroke-width="3.30" stroke-linecap="round"/>
<path d="M478.0 160.0C477.0 157.3 484.7 150.0 490.0 146.0C495.3 142.0 503.3 138.8 510.0 136.0C516.7 133.2 524.3 130.7 530.0 129.0C535.7 127.3 540.7 125.9 544.0 125.6C547.3 125.3 549.2 125.9 550.0 127.0C550.8 128.1 551.3 129.8 549.0 132.0C546.7 134.2 541.5 137.3 536.0 140.0C530.5 142.7 522.0 145.5 516.0 148.0C510.0 150.5 503.3 152.7 500.0 155.0C496.7 157.3 499.7 161.2 496.0 162.0C492.3 162.8 479.0 162.7 478.0 160.0Z" fill="#cf7a3e" stroke="#3a2a20" stroke-width="4.4" stroke-linejoin="round" stroke-linecap="round"/>
<path d="M506.0 164.0C506.0 162.7 514.3 160.5 520.0 159.0C525.7 157.5 534.3 155.8 540.0 155.0C545.7 154.2 549.7 154.2 554.0 154.0C558.3 153.8 561.8 153.0 566.0 154.0C570.2 155.0 578.3 157.8 579.0 160.0C579.7 162.2 574.2 165.3 570.0 167.0C565.8 168.7 559.0 169.7 554.0 170.0C549.0 170.3 545.7 169.5 540.0 169.0C534.3 168.5 525.7 167.8 520.0 167.0C514.3 166.2 506.0 165.3 506.0 164.0Z" fill="#cf7a3e" stroke="#3a2a20" stroke-width="4.4" stroke-linejoin="round" stroke-linecap="round"/>
<path d="M521.0 221.0C522.6 217.6 526.7 212.0 529.0 213.0C531.3 214.0 532.5 221.5 534.6 227.0C536.7 232.5 539.3 240.2 541.8 246.0C544.3 251.8 549.0 258.9 549.8 262.0C550.6 265.1 548.7 265.0 546.6 264.5C544.5 264.0 540.2 261.8 537.0 259.0C533.8 256.2 530.3 252.2 527.4 248.0C524.5 243.8 520.5 238.1 519.4 233.6C518.3 229.1 519.4 224.4 521.0 221.0Z" fill="#cf7a3e" stroke="#3a2a20" stroke-width="3.9600000000000004" stroke-linejoin="round" stroke-linecap="round"/>
<path d="M480.0 158.0C475.7 158.7 472.6 161.8 470.0 164.0C467.4 166.2 466.2 168.3 464.5 171.0C462.8 173.7 461.0 177.6 460.0 180.0C459.0 182.4 459.5 184.2 458.5 185.5C457.5 186.8 454.0 186.7 454.0 188.0C454.0 189.3 456.3 192.1 458.5 193.5C460.7 194.9 470.1 195.9 467.0 196.5C463.9 197.1 447.8 196.6 440.0 197.0C432.2 197.4 424.5 198.0 420.0 199.0C415.5 200.0 413.8 201.5 413.0 203.0C412.2 204.5 412.8 206.5 415.0 208.0C417.2 209.5 421.8 210.7 426.0 212.0C430.2 213.3 435.3 214.3 440.0 216.0C444.7 217.7 451.0 218.0 454.0 222.0C457.0 226.0 456.3 233.0 458.0 240.0C459.7 247.0 462.2 256.0 464.0 264.0C465.8 272.0 463.0 282.0 469.0 288.0C475.0 294.0 488.5 298.3 500.0 300.0C511.5 301.7 531.3 301.7 538.0 298.0C544.7 294.3 540.7 283.7 540.0 278.0C539.3 272.3 536.3 269.3 534.0 264.0C531.7 258.7 528.3 251.7 526.0 246.0C523.7 240.3 521.7 237.7 520.0 230.0C518.3 222.3 518.0 209.7 516.0 200.0C514.0 190.3 511.3 178.7 508.0 172.0C504.7 165.3 500.7 162.3 496.0 160.0C491.3 157.7 484.3 157.3 480.0 158.0Z" fill="#cf7a3e" stroke="#3a2a20" stroke-width="4.4" stroke-linejoin="round" stroke-linecap="round"/>
<path d="M470.0 232.0C471.3 229.3 475.0 228.0 480.0 228.0C485.0 228.0 494.3 230.3 500.0 232.0C505.7 233.7 512.0 235.0 514.0 238.0C516.0 241.0 514.7 247.3 512.0 250.0C509.3 252.7 503.3 254.0 498.0 254.0C492.7 254.0 484.3 251.7 480.0 250.0C475.7 248.3 473.7 247.0 472.0 244.0C470.3 241.0 468.7 234.7 470.0 232.0Z" fill="#c46e3a"/>
<path d="M467.0 293.0C473.3 290.3 491.8 287.5 500.0 284.0C508.2 280.5 510.7 274.2 516.0 272.0C521.3 269.8 527.8 270.3 532.0 271.0C536.2 271.7 537.4 273.6 541.0 276.0C544.6 278.4 549.3 280.8 553.5 285.5C557.7 290.2 562.5 298.8 566.0 304.5C569.5 310.2 573.0 316.1 574.5 319.5C576.0 322.9 574.9 324.1 575.0 325.0C575.1 325.9 576.2 324.9 575.0 325.0C573.8 325.1 571.2 325.5 568.0 325.8C564.8 326.1 559.4 325.5 556.0 326.6C552.6 327.7 550.1 330.2 547.6 332.4C545.1 334.6 542.8 337.8 541.0 340.0C539.2 342.2 537.5 344.7 536.8 345.6C536.1 346.5 537.6 346.6 536.8 345.6C536.0 344.6 533.8 342.0 532.0 339.6C530.2 337.2 529.3 332.4 526.0 331.0C522.7 329.6 517.0 330.7 512.0 331.0C507.0 331.3 500.0 331.8 496.0 333.0C492.0 334.2 490.0 336.2 488.0 338.0C486.0 339.8 486.3 342.0 484.0 344.0C481.7 346.0 478.0 349.2 474.0 350.0C470.0 350.8 464.3 351.0 460.0 349.0C455.7 347.0 451.2 341.8 448.0 338.0C444.8 334.2 442.0 329.2 441.0 326.0C440.0 322.8 439.8 321.7 442.0 319.0C444.2 316.3 450.7 313.2 454.0 310.0C457.3 306.8 459.8 302.8 462.0 300.0C464.2 297.2 460.7 295.7 467.0 293.0Z" fill="#5c5c5c" stroke="#3a2a20" stroke-width="4.18" stroke-linejoin="round" stroke-linecap="round"/>
<path d="M519.0 279.0C518.0 281.8 519.3 287.8 521.0 291.0C522.7 294.2 526.3 297.5 529.0 298.0C531.7 298.5 535.3 296.2 537.0 294.0C538.7 291.8 539.2 287.8 539.0 285.0C538.8 282.2 538.0 278.8 536.0 277.0C534.0 275.2 529.8 273.7 527.0 274.0C524.2 274.3 520.0 276.2 519.0 279.0Z" fill="#cf7a3e" stroke="#3a2a20" stroke-width="2.8600000000000003" stroke-linejoin="round" stroke-linecap="round"/><path d="M418.0 86.0C423.3 85.1 433.7 85.1 440.0 85.6C446.3 86.1 452.0 87.4 456.0 89.0C460.0 90.6 462.7 93.2 464.0 95.0C465.3 96.8 462.3 98.2 463.6 100.0C464.9 101.8 469.3 102.7 472.0 106.0C474.7 109.3 479.0 115.7 480.0 120.0C481.0 124.3 480.7 128.5 478.0 132.0C475.3 135.5 470.3 138.8 464.0 141.0C457.7 143.2 449.0 144.3 440.0 145.0C431.0 145.7 417.7 145.8 410.0 145.0C402.3 144.2 397.8 142.5 394.0 140.0C390.2 137.5 387.8 133.7 387.0 130.0C386.2 126.3 387.2 122.7 389.0 118.0C390.8 113.3 394.8 106.5 398.0 102.0C401.2 97.5 404.7 93.7 408.0 91.0C411.3 88.3 412.7 86.9 418.0 86.0Z" fill="#ee22b8"/>
<path d="M414.0 385.0C418.0 384.7 424.3 384.8 428.0 386.0C431.7 387.2 434.0 389.3 436.0 392.0C438.0 394.7 438.0 398.7 440.0 402.0C442.0 405.3 446.7 409.0 448.0 412.0C449.3 415.0 449.3 417.3 448.0 420.0C446.7 422.7 444.7 425.2 440.0 428.0C435.3 430.8 426.7 434.5 420.0 437.0C413.3 439.5 405.3 442.4 400.0 443.0C394.7 443.6 391.9 442.7 388.0 440.5C384.1 438.3 379.3 434.1 376.5 430.0C373.7 425.9 371.8 420.0 371.0 416.0C370.2 412.0 370.3 408.8 371.5 406.0C372.7 403.2 374.9 401.0 378.0 399.0C381.1 397.0 385.7 395.8 390.0 394.0C394.3 392.2 400.0 389.5 404.0 388.0C408.0 386.5 410.0 385.3 414.0 385.0Z" fill="#ee22b8"/>
<ellipse cx="421" cy="411.6" rx="8" ry="4.5" fill="#fff" transform="rotate(-25 421 411.6)"/>
<ellipse cx="424" cy="423" rx="6.5" ry="5" fill="#fff" transform="rotate(-25 424 423)"/>
<ellipse cx="400" cy="421" rx="7.5" ry="4.5" fill="#fff" transform="rotate(-10 400 421)"/>
<ellipse cx="405" cy="430" rx="8" ry="5" fill="#fff" transform="rotate(-30 405 430)"/></g>
<g transform="translate(40 40)"><path d="M41.8 32.2L57.4 35.7L52.6 54.4L36.9 50.5Z" fill="#e81fb2" stroke="#e81fb2" stroke-width="1.2" stroke-linejoin="round"/><path d="M43.5 42.4l4.6 1l-1 3.6l-4.6 -1zM49.6 43.8l4.4 1l-1 3.6l-4.4 -1zM42.2 47.6l4.6 1l-0.8 2.8l-4.6 -1zM48.2 49l4.2 1l-0.7 2.6l-4.2 -1z" fill="#fff"/><path d="M66.0 56.0C64.5 56.2 62.2 59.6 60.0 61.0C57.8 62.4 54.7 63.7 53.0 64.5C51.3 65.3 50.2 65.4 49.8 66.0C49.4 66.6 49.3 67.7 50.5 68.0C51.7 68.3 55.1 68.2 57.0 67.6C58.9 67.0 60.0 65.8 62.0 64.5C64.0 63.2 68.3 61.4 69.0 60.0C69.7 58.6 67.5 55.8 66.0 56.0Z" fill="#b9733c" stroke="#3a2a20" stroke-width="0.5" stroke-linejoin="round" stroke-linecap="round"/><path d="M76.0 58.0C76.9 58.3 77.3 61.0 78.0 62.0C78.7 63.0 78.6 63.5 80.0 64.0C81.4 64.5 85.3 64.5 86.5 65.0C87.7 65.5 88.2 66.6 87.0 67.0C85.8 67.4 81.1 67.7 79.0 67.4C76.9 67.1 75.7 66.2 74.6 65.0C73.5 63.8 72.3 61.2 72.5 60.0C72.7 58.8 75.1 57.7 76.0 58.0Z" fill="#b9733c" stroke="#3a2a20" stroke-width="0.5" stroke-linejoin="round" stroke-linecap="round"/><path d="M76.6 26.0C76.4 24.9 77.5 21.7 78.4 20.0C79.3 18.3 81.1 16.1 81.8 15.7C82.5 15.3 82.8 16.4 82.6 17.5C82.4 18.6 81.1 21.0 80.6 22.5C80.1 24.0 80.3 25.9 79.6 26.5C78.9 27.1 76.8 27.1 76.6 26.0Z" fill="#b9733c" stroke="#3a2a20" stroke-width="0.5" stroke-linejoin="round" stroke-linecap="round"/><path d="M80.0 25.6C80.5 24.7 82.8 23.0 84.6 22.2C86.3 21.4 89.6 20.8 90.5 20.9C91.4 21.0 90.8 22.0 90.0 22.6C89.2 23.2 86.8 23.8 85.4 24.6C84.0 25.4 82.5 27.4 81.6 27.6C80.7 27.8 79.5 26.5 80.0 25.6Z" fill="#b9733c" stroke="#3a2a20" stroke-width="0.5" stroke-linejoin="round" stroke-linecap="round"/><path d="M76.0 25.0C74.9 25.5 73.9 26.8 73.4 28.0C72.9 29.2 72.7 30.8 73.0 32.0C73.3 33.2 74.0 34.4 75.0 35.0C76.0 35.6 77.7 35.8 79.0 35.6C80.3 35.4 81.7 34.5 82.6 33.6C83.5 32.7 84.5 31.2 84.6 30.0C84.7 28.8 83.8 27.5 83.0 26.6C82.2 25.7 81.2 25.1 80.0 24.8C78.8 24.5 77.1 24.5 76.0 25.0Z" fill="#b9733c" stroke="#3a2a20" stroke-width="0.5" stroke-linejoin="round" stroke-linecap="round"/><ellipse cx="81.8" cy="30.4" rx="1.8" ry="2.6" fill="#eee" stroke="#3a2a20" stroke-width="0.4"/><path d="M73.0 36.0C74.6 34.8 78.2 34.3 80.0 35.0C81.8 35.7 83.6 37.5 84.0 40.0C84.4 42.5 84.4 48.6 82.4 50.0C80.4 51.4 74.0 49.9 72.0 48.6C70.0 47.3 70.4 44.1 70.6 42.0C70.8 39.9 71.4 37.2 73.0 36.0Z" fill="#ebe7df" stroke="#3a2a20" stroke-width="0.5" stroke-linejoin="round" stroke-linecap="round"/><path d="M70.6 47.6C73.2 47.3 80.1 48.0 82.0 49.4C83.9 50.8 82.1 54.2 81.8 56.0C81.5 57.8 81.2 59.6 80.0 60.0C78.8 60.4 75.7 59.3 74.6 58.6C73.5 57.9 74.4 55.4 73.6 55.6C72.8 55.8 71.3 59.4 69.6 59.6C67.9 59.8 64.1 58.0 63.6 56.6C63.1 55.2 65.4 52.5 66.6 51.0C67.8 49.5 68.0 47.9 70.6 47.6Z" fill="#5c5c5c" stroke="#3a2a20" stroke-width="0.5" stroke-linejoin="round" stroke-linecap="round"/><path d="M70.6 36.0C70.9 34.7 72.4 33.6 73.6 33.2C74.8 32.8 76.9 32.9 78.0 33.4C79.1 33.9 79.8 35.2 80.0 36.4C80.2 37.6 80.1 39.6 79.4 40.6C78.7 41.6 76.9 42.5 75.6 42.6C74.3 42.7 72.4 42.3 71.6 41.2C70.8 40.1 70.3 37.3 70.6 36.0Z" fill="#dc2a22" stroke="#3a2a20" stroke-width="0.5" stroke-linejoin="round" stroke-linecap="round"/><path d="M83.0 37.0C83.3 35.7 84.5 34.6 85.6 34.2C86.7 33.8 88.7 33.9 89.8 34.4C90.9 34.9 91.7 36.2 92.0 37.4C92.3 38.6 92.1 40.6 91.4 41.6C90.7 42.6 88.9 43.5 87.6 43.6C86.3 43.7 84.4 43.3 83.6 42.2C82.8 41.1 82.7 38.3 83.0 37.0Z" fill="#dc2a22" stroke="#3a2a20" stroke-width="0.5" stroke-linejoin="round" stroke-linecap="round"/></g>
<g transform="translate(40 131)"><path d="M23.0 29.4C25.2 28.5 32.5 28.2 34.6 28.8C36.7 29.4 35.7 30.6 35.8 33.0C35.9 35.4 36.5 41.2 35.2 43.0C33.9 44.8 30.1 43.9 28.0 43.6C25.9 43.3 23.7 42.6 22.6 41.0C21.5 39.4 21.5 35.9 21.6 34.0C21.7 32.1 20.8 30.3 23.0 29.4Z" fill="#ee3cc0"/><path d="M24.6 38.6h3.4v3.6h-3.4zM29.4 38.8h3.4v3.6h-3.4z" fill="#fff"/><path d="M58.0 55.0C57.1 55.5 57.6 58.7 56.6 60.0C55.6 61.3 53.7 62.3 52.0 63.0C50.3 63.7 47.2 63.8 46.4 64.4C45.6 65.0 45.7 66.3 47.0 66.6C48.3 66.9 52.1 67.0 54.0 66.4C55.9 65.8 57.3 64.6 58.6 63.0C59.9 61.4 62.1 58.3 62.0 57.0C61.9 55.7 58.9 54.5 58.0 55.0Z" fill="#d47e3c" stroke="#3a2a20" stroke-width="0.5" stroke-linejoin="round" stroke-linecap="round"/><path d="M68.0 55.0C69.0 55.2 70.7 57.7 72.0 59.0C73.3 60.3 74.2 62.2 76.0 63.0C77.8 63.8 81.4 63.4 82.6 64.0C83.8 64.6 84.5 65.9 83.4 66.4C82.3 66.9 77.9 67.2 76.0 66.8C74.1 66.4 73.7 65.5 72.0 64.0C70.3 62.5 66.7 59.5 66.0 58.0C65.3 56.5 67.0 54.8 68.0 55.0Z" fill="#d47e3c" stroke="#3a2a20" stroke-width="0.5" stroke-linejoin="round" stroke-linecap="round"/><path d="M75 65.2L83 65.4" stroke="#c22" stroke-width="1.2"/><path d="M47.4 65.6L54 65.4" stroke="#c22" stroke-width="0.8"/><path d="M48.6 23.6C47.3 23.1 44.6 20.8 43.0 19.6C41.4 18.4 39.4 17.0 39.0 16.4C38.6 15.8 39.5 15.6 40.6 16.0C41.7 16.4 43.9 17.5 45.6 18.6C47.3 19.7 50.1 21.6 50.6 22.4C51.1 23.2 49.9 24.1 48.6 23.6Z" fill="#d47e3c" stroke="#3a2a20" stroke-width="0.5" stroke-linejoin="round" stroke-linecap="round"/><path d="M50.6 23.0C49.5 22.4 48.1 20.1 47.0 19.0C45.9 17.9 44.4 16.9 44.2 16.4C44.0 15.9 44.8 15.6 45.8 16.0C46.8 16.4 48.7 17.9 50.0 19.0C51.3 20.1 53.5 21.9 53.6 22.6C53.7 23.3 51.7 23.6 50.6 23.0Z" fill="#d47e3c" stroke="#3a2a20" stroke-width="0.5" stroke-linejoin="round" stroke-linecap="round"/><path d="M56.0 31.6C56.6 30.1 58.9 31.8 60.6 33.0C62.3 34.2 64.4 36.5 66.0 38.6C67.6 40.7 70.0 43.9 70.0 45.6C70.0 47.3 68.0 48.0 66.0 48.6C64.0 49.2 59.5 50.1 58.0 49.0C56.5 47.9 57.3 44.9 57.0 42.0C56.7 39.1 55.4 33.1 56.0 31.6Z" fill="#e6e2da" stroke="#3a2a20" stroke-width="0.5" stroke-linejoin="round" stroke-linecap="round"/><path d="M43.0 31.6C44.5 31.1 49.5 30.9 52.0 31.0C54.5 31.1 57.0 31.8 58.0 32.4C59.0 33.0 59.3 34.3 58.0 34.6C56.7 34.9 52.5 34.5 50.0 34.4C47.5 34.3 44.2 34.5 43.0 34.0C41.8 33.5 41.5 32.1 43.0 31.6Z" fill="#d47e3c" stroke="#3a2a20" stroke-width="0.4" stroke-linejoin="round" stroke-linecap="round"/><path d="M48.0 23.0C48.9 22.3 50.6 21.6 52.0 22.0C53.4 22.4 55.5 24.2 56.6 25.6C57.7 27.0 58.4 29.1 58.4 30.6C58.4 32.1 57.6 33.7 56.4 34.4C55.2 35.1 52.9 35.4 51.4 34.8C49.9 34.2 48.2 32.5 47.4 31.0C46.6 29.5 46.5 27.3 46.6 26.0C46.7 24.7 47.1 23.7 48.0 23.0Z" fill="#d47e3c" stroke="#3a2a20" stroke-width="0.5" stroke-linejoin="round" stroke-linecap="round"/><path d="M57.6 47.6C59.4 47.1 63.9 48.5 66.0 48.2C68.1 47.9 69.2 45.0 70.4 45.6C71.6 46.2 72.6 49.8 73.0 52.0C73.4 54.2 73.4 57.4 72.6 58.6C71.8 59.8 69.4 59.8 68.0 59.2C66.6 58.6 65.3 55.0 64.0 55.0C62.7 55.0 61.6 58.8 60.0 59.0C58.4 59.2 55.2 57.3 54.4 56.0C53.6 54.7 54.5 52.4 55.0 51.0C55.5 49.6 55.8 48.1 57.6 47.6Z" fill="#5c5c5c" stroke="#3a2a20" stroke-width="0.5" stroke-linejoin="round" stroke-linecap="round"/><path d="M33.2 33.0C33.6 32.3 34.7 31.7 36.0 31.4C37.3 31.1 39.7 31.1 41.0 31.4C42.3 31.7 43.3 32.6 43.6 33.4C43.9 34.2 43.8 35.5 43.0 36.2C42.2 36.9 40.3 37.5 39.0 37.6C37.7 37.7 35.9 37.4 35.0 37.0C34.1 36.6 33.7 36.1 33.4 35.4C33.1 34.7 32.8 33.7 33.2 33.0Z" fill="#dc2a22" stroke="#3a2a20" stroke-width="0.5" stroke-linejoin="round" stroke-linecap="round"/><path d="M47.2 39.0C47.3 37.8 48.0 37.1 49.0 36.6C50.0 36.1 51.9 35.9 53.0 36.2C54.1 36.5 55.4 37.5 55.8 38.6C56.2 39.7 56.0 41.5 55.4 42.6C54.8 43.7 53.2 45.0 52.0 45.2C50.8 45.4 49.2 45.0 48.4 44.0C47.6 43.0 47.1 40.2 47.2 39.0Z" fill="#dc2a22" stroke="#3a2a20" stroke-width="0.5" stroke-linejoin="round" stroke-linecap="round"/></g>
<g clip-path="url(#c9)"><g transform="translate(40 404)"><path d="M39.4 17.0C39.0 16.0 38.1 15.8 38.4 16.0C38.7 16.2 39.9 16.7 41.0 18.0C42.1 19.3 44.0 21.9 45.0 23.6C46.0 25.3 47.2 27.4 47.0 28.0C46.8 28.6 45.0 28.0 44.0 27.0C43.0 26.0 41.8 23.7 41.0 22.0C40.2 20.3 39.8 18.0 39.4 17.0Z" fill="#d47e3c" stroke="#3a2a20" stroke-width="0.5" stroke-linejoin="round" stroke-linecap="round"/><path d="M44.0 16.4C43.8 15.2 44.8 15.2 45.6 16.0C46.4 16.8 47.8 19.3 49.0 21.0C50.2 22.7 52.3 24.8 52.6 26.0C52.9 27.2 51.9 28.5 51.0 28.0C50.1 27.5 48.2 24.9 47.0 23.0C45.8 21.1 44.2 17.6 44.0 16.4Z" fill="#d47e3c" stroke="#3a2a20" stroke-width="0.5" stroke-linejoin="round" stroke-linecap="round"/><path d="M46.4 30.0C46.9 28.5 47.7 27.1 49.0 26.6C50.3 26.1 52.3 26.3 54.0 27.0C55.7 27.7 57.5 29.6 59.0 31.0C60.5 32.4 65.2 34.8 63.0 35.6C60.8 36.4 48.8 36.5 46.0 35.6C43.2 34.7 45.9 31.5 46.4 30.0Z" fill="#d47e3c" stroke="#3a2a20" stroke-width="0.5" stroke-linejoin="round" stroke-linecap="round"/><path d="M32.0 33.4C32.6 32.7 34.3 31.9 36.0 31.6C37.7 31.3 40.6 31.5 42.0 31.8C43.4 32.1 44.1 33.0 44.4 33.6C44.7 34.2 46.0 35.3 44.0 35.6C42.0 35.9 34.4 36.0 32.4 35.6C30.4 35.2 31.4 34.1 32.0 33.4Z" fill="#dc2a22" stroke="#3a2a20" stroke-width="0.5" stroke-linejoin="round" stroke-linecap="round"/><path d="M44 34.6H58" stroke="#eee" stroke-width="1.2"/></g></g>
<defs><clipPath id="c9"><rect x="40" y="404" width="102" height="36"/></clipPath></defs>
<path d="M48.6 121.0H60M121.6 121.0H133.4" stroke="#333" stroke-width="1.9" stroke-linecap="round"/><circle cx="90.8" cy="121.0" r="1.6" fill="#222"/>
<path d="M48.6 212.0H60M121.6 212.0H133.4" stroke="#333" stroke-width="1.9" stroke-linecap="round"/><circle cx="90.8" cy="212.0" r="1.6" fill="#222"/>
<path d="M48.6 303.0H60M121.6 303.0H133.4" stroke="#333" stroke-width="1.9" stroke-linecap="round"/><circle cx="90.8" cy="303.0" r="1.6" fill="#222"/>
<path d="M48.6 394.0H60M121.6 394.0H133.4" stroke="#333" stroke-width="1.9" stroke-linecap="round"/><circle cx="90.8" cy="394.0" r="1.6" fill="#222"/>
<circle cx="56.9" cy="99.8" r="11.4" fill="#000"/><text x="56.9" y="102.6" font-size="8.8" fill="#fff" text-anchor="middle" font-family="Liberation Sans, sans-serif">×4</text>
<circle cx="56.9" cy="190.8" r="11.4" fill="#000"/><text x="56.9" y="193.6" font-size="8.8" fill="#fff" text-anchor="middle" font-family="Liberation Sans, sans-serif">×2</text>
<g transform="translate(192 25) scale(0.1778) translate(-354 -23)"><path d="M700.0 330.0C701.7 328.5 711.0 330.7 716.0 333.0C721.0 335.3 725.3 339.8 730.0 344.0C734.7 348.2 739.0 353.3 744.0 358.0C749.0 362.7 755.0 368.0 760.0 372.0C765.0 376.0 768.7 379.7 774.0 382.0C779.3 384.3 788.0 384.3 792.0 386.0C796.0 387.7 797.3 390.2 798.0 392.0C798.7 393.8 797.7 395.7 796.0 397.0C794.3 398.3 791.3 399.2 788.0 400.0C784.7 400.8 780.0 402.2 776.0 402.0C772.0 401.8 767.3 401.0 764.0 399.0C760.7 397.0 759.0 393.5 756.0 390.0C753.0 386.5 749.3 382.0 746.0 378.0C742.7 374.0 739.7 370.0 736.0 366.0C732.3 362.0 729.0 358.0 724.0 354.0C719.0 350.0 710.0 346.0 706.0 342.0C702.0 338.0 698.3 331.5 700.0 330.0Z" fill="#fff" stroke="#333" stroke-width="3.6" stroke-linejoin="round" stroke-linecap="round"/>
<path d="M776 384C782 386 786 390 788 396M770 388C776 390 780 394 780 400" fill="none" stroke="#333" stroke-width="2.60" stroke-linecap="round"/>
<path d="M585.0 343.0C581.7 343.7 579.3 350.5 578.0 354.0C576.7 357.5 576.7 361.3 577.0 364.0C577.3 366.7 580.5 368.3 580.0 370.0C579.5 371.7 576.3 372.7 574.0 374.0C571.7 375.3 569.7 377.2 566.0 378.0C562.3 378.8 555.7 378.3 552.0 379.0C548.3 379.7 545.5 379.8 544.0 382.0C542.5 384.2 541.3 389.8 543.0 392.0C544.7 394.2 548.8 394.5 554.0 395.0C559.2 395.5 568.7 395.8 574.0 395.0C579.3 394.2 583.5 392.5 586.0 390.0C588.5 387.5 587.2 383.7 589.0 380.0C590.8 376.3 594.5 371.0 597.0 368.0C599.5 365.0 603.8 365.0 604.0 362.0C604.2 359.0 601.2 353.2 598.0 350.0C594.8 346.8 588.3 342.3 585.0 343.0Z" fill="#fff" stroke="#333" stroke-width="3.6" stroke-linejoin="round" stroke-linecap="round"/>
<path d="M562 380L562.5 394.5M548 384C552 383 556 384 557 388M577 364C582 368 588 370 594 371M574 374C578 378 582 380 588 381" fill="none" stroke="#333" stroke-width="2.80" stroke-linecap="round"/>
<path d="M664.8 141.3C666.5 141.1 665.2 140.2 664.8 141.3C664.4 142.4 664.1 145.6 662.4 148.0C660.7 150.4 657.6 153.3 654.4 156.0C651.2 158.7 646.3 161.8 643.2 164.0C640.1 166.2 636.4 166.7 636.0 169.0C635.6 171.3 639.9 174.8 641.0 178.0C642.1 181.2 642.2 184.3 642.5 188.0C642.8 191.7 643.1 196.0 643.0 200.0C642.9 204.0 645.8 207.7 642.0 212.0C638.2 216.3 626.3 224.0 620.0 226.0C613.7 228.0 607.3 226.0 604.0 224.0C600.7 222.0 601.8 217.7 600.0 214.0C598.2 210.3 594.0 205.7 593.0 202.0C592.0 198.3 592.8 195.7 594.0 192.0C595.2 188.3 598.5 183.6 600.0 180.0C601.5 176.4 601.6 173.1 603.2 170.4C604.8 167.7 607.2 166.1 609.6 164.0C612.0 161.9 614.7 159.3 617.6 157.6C620.5 155.9 623.5 155.2 627.2 153.6C630.9 152.0 635.5 149.9 640.0 148.0C644.5 146.1 650.3 143.5 654.4 142.4C658.5 141.3 663.1 141.5 664.8 141.3Z" fill="#fff" stroke="#333" stroke-width="3.6" stroke-linejoin="round" stroke-linecap="round"/>
<path d="M624 170.4C628 170 632 168.6 636 166.4" fill="none" stroke="#333" stroke-width="2.60" stroke-linecap="round"/>
<path d="M639.0 174.0C640.3 172.0 646.7 168.7 650.0 167.0C653.3 165.3 654.3 164.3 659.0 164.0C663.7 163.7 671.5 164.3 678.0 165.0C684.5 165.7 694.3 167.0 698.0 168.0C701.7 169.0 702.3 169.7 700.0 171.0C697.7 172.3 690.3 174.5 684.0 176.0C677.7 177.5 669.0 179.5 662.0 180.0C655.0 180.5 645.8 180.0 642.0 179.0C638.2 178.0 637.7 176.0 639.0 174.0Z" fill="#fff" stroke="#333" stroke-width="3.6" stroke-linejoin="round" stroke-linecap="round"/>
<path d="M586.0 228.0C588.5 223.7 594.0 223.7 597.0 224.0C600.0 224.3 603.8 226.7 604.0 230.0C604.2 233.3 599.3 239.3 598.0 244.0C596.7 248.7 596.7 252.7 596.0 258.0C595.3 263.3 595.3 272.8 594.0 276.0C592.7 279.2 590.3 278.0 588.0 277.0C585.7 276.0 581.0 274.5 580.0 270.0C579.0 265.5 581.0 257.0 582.0 250.0C583.0 243.0 583.5 232.3 586.0 228.0Z" fill="#fff" stroke="#333" stroke-width="3.2" stroke-linejoin="round" stroke-linecap="round"/>
<path d="M604.0 222.0C606.7 217.7 609.0 214.3 612.0 214.0C615.0 213.7 617.3 216.3 622.0 220.0C626.7 223.7 633.7 229.8 640.0 236.0C646.3 242.2 655.3 252.0 660.0 257.0C664.7 262.0 665.3 262.5 668.0 266.0C670.7 269.5 673.7 274.7 676.0 278.0C678.3 281.3 683.0 285.0 682.0 286.0C681.0 287.0 675.3 284.3 670.0 284.0C664.7 283.7 656.7 283.3 650.0 284.0C643.3 284.7 636.3 286.2 630.0 288.0C623.7 289.8 615.7 294.7 612.0 295.0C608.3 295.3 610.2 293.5 608.0 290.0C605.8 286.5 601.2 279.7 599.0 274.0C596.8 268.3 595.5 261.7 595.0 256.0C594.5 250.3 594.5 245.7 596.0 240.0C597.5 234.3 601.3 226.3 604.0 222.0Z" fill="#fff" stroke="#333" stroke-width="3.0" stroke-linejoin="round" stroke-linecap="round"/>
<path d="M607.0 296.0C608.5 293.9 608.2 295.3 612.0 293.6C615.8 291.9 623.7 287.8 630.0 286.0C636.3 284.2 643.3 283.2 650.0 282.6C656.7 282.0 664.5 282.0 670.0 282.6C675.5 283.2 680.0 283.8 683.0 286.0C686.0 288.2 685.5 292.0 688.0 296.0C690.5 300.0 694.7 305.3 698.0 310.0C701.3 314.7 705.0 320.3 708.0 324.0C711.0 327.7 716.3 329.3 716.0 332.0C715.7 334.7 709.0 337.3 706.0 340.0C703.0 342.7 701.0 346.2 698.0 348.0C695.0 349.8 690.7 351.3 688.0 351.0C685.3 350.7 684.3 348.2 682.0 346.0C679.7 343.8 676.7 340.2 674.0 338.0C671.3 335.8 669.3 334.3 666.0 333.0C662.7 331.7 658.0 329.5 654.0 330.0C650.0 330.5 645.3 334.3 642.0 336.0C638.7 337.7 636.7 337.7 634.0 340.0C631.3 342.3 629.0 345.5 626.0 350.0C623.0 354.5 619.7 364.8 616.0 367.0C612.3 369.2 607.7 365.2 604.0 363.0C600.3 360.8 597.0 357.2 594.0 354.0C591.0 350.8 587.5 346.5 586.0 344.0C584.5 341.5 584.3 341.0 585.0 339.0C585.7 337.0 587.8 335.2 590.0 332.0C592.2 328.8 595.8 324.3 598.0 320.0C600.2 315.7 601.5 310.0 603.0 306.0C604.5 302.0 605.5 298.1 607.0 296.0Z" fill="#fff" stroke="#333" stroke-width="3.6" stroke-linejoin="round" stroke-linecap="round"/>
<path d="M643 288.4L652.6 286.4L654.4 290.8L645.4 294Z M655.6 286.4L664.6 287.6L665 293L656.8 291.2Z" fill="#f4f4f4" stroke="#333" stroke-width="2.00" stroke-linejoin="round"/><path d="M652.4 291.6L649.8 296.6M657.4 291.6L659.4 298.4" stroke="#e8e8e8" stroke-width="2.80" stroke-linecap="round" fill="none"/>
<path d="M667.0 257.0C667.0 254.7 670.2 250.8 672.0 250.0C673.8 249.2 676.2 250.0 678.0 252.0C679.8 254.0 682.7 259.5 683.0 262.0C683.3 264.5 681.8 266.7 680.0 267.0C678.2 267.3 674.2 265.7 672.0 264.0C669.8 262.3 667.0 259.3 667.0 257.0Z" fill="#fff" stroke="#333" stroke-width="3.0" stroke-linejoin="round" stroke-linecap="round"/>
<path d="M620.0 218.0C622.0 214.5 624.7 212.5 628.0 211.0C631.3 209.5 636.0 208.7 640.0 209.0C644.0 209.3 648.7 211.2 652.0 213.0C655.3 214.8 658.0 217.2 660.0 220.0C662.0 222.8 663.2 226.7 664.0 230.0C664.8 233.3 663.7 237.0 665.0 240.0C666.3 243.0 671.0 245.7 672.0 248.0C673.0 250.3 673.0 252.5 671.0 254.0C669.0 255.5 662.5 257.3 660.0 257.0C657.5 256.7 659.0 252.5 656.0 252.0C653.0 251.5 646.3 254.3 642.0 254.0C637.7 253.7 633.7 252.3 630.0 250.0C626.3 247.7 622.3 243.0 620.0 240.0C617.7 237.0 616.0 235.7 616.0 232.0C616.0 228.3 618.0 221.5 620.0 218.0Z" fill="#fff" stroke="#333" stroke-width="3.6" stroke-linejoin="round" stroke-linecap="round"/>
<path d="M656 252C656 244 654 238 650 234" fill="none" stroke="#333" stroke-width="2.60" stroke-linecap="round"/>
<path d="M554.0 210.0C557.7 210.0 562.3 212.3 566.0 214.0C569.7 215.7 573.3 217.7 576.0 220.0C578.7 222.3 580.7 224.7 582.0 228.0C583.3 231.3 583.2 236.3 584.0 240.0C584.8 243.7 587.0 247.0 587.0 250.0C587.0 253.0 585.5 255.0 584.0 258.0C582.5 261.0 580.3 265.5 578.0 268.0C575.7 270.5 572.3 273.0 570.0 273.0C567.7 273.0 566.7 269.8 564.0 268.0C561.3 266.2 556.7 263.3 554.0 262.0C551.3 260.7 550.3 262.3 548.0 260.0C545.7 257.7 542.0 252.0 540.0 248.0C538.0 244.0 536.5 240.3 536.0 236.0C535.5 231.7 535.7 225.7 537.0 222.0C538.3 218.3 541.2 216.0 544.0 214.0C546.8 212.0 550.3 210.0 554.0 210.0Z" fill="#fff" stroke="#333" stroke-width="3.6" stroke-linejoin="round" stroke-linecap="round"/>
<path d="M564 268C570 262 574 256 574 248M554 262C560 258 566 256 570 250" fill="none" stroke="#333" stroke-width="2.60" stroke-linecap="round"/></g>
<g transform="translate(192 157) scale(0.1778) translate(-354 -23)"><path d="M700.0 330.0C701.7 328.5 711.0 330.7 716.0 333.0C721.0 335.3 725.3 339.8 730.0 344.0C734.7 348.2 739.0 353.3 744.0 358.0C749.0 362.7 755.0 368.0 760.0 372.0C765.0 376.0 768.7 379.7 774.0 382.0C779.3 384.3 788.0 384.3 792.0 386.0C796.0 387.7 797.3 390.2 798.0 392.0C798.7 393.8 797.7 395.7 796.0 397.0C794.3 398.3 791.3 399.2 788.0 400.0C784.7 400.8 780.0 402.2 776.0 402.0C772.0 401.8 767.3 401.0 764.0 399.0C760.7 397.0 759.0 393.5 756.0 390.0C753.0 386.5 749.3 382.0 746.0 378.0C742.7 374.0 739.7 370.0 736.0 366.0C732.3 362.0 729.0 358.0 724.0 354.0C719.0 350.0 710.0 346.0 706.0 342.0C702.0 338.0 698.3 331.5 700.0 330.0Z" fill="#e07d35"/>

<path d="M585.0 343.0C581.7 343.7 579.3 350.5 578.0 354.0C576.7 357.5 576.7 361.3 577.0 364.0C577.3 366.7 580.5 368.3 580.0 370.0C579.5 371.7 576.3 372.7 574.0 374.0C571.7 375.3 569.7 377.2 566.0 378.0C562.3 378.8 555.7 378.3 552.0 379.0C548.3 379.7 545.5 379.8 544.0 382.0C542.5 384.2 541.3 389.8 543.0 392.0C544.7 394.2 548.8 394.5 554.0 395.0C559.2 395.5 568.7 395.8 574.0 395.0C579.3 394.2 583.5 392.5 586.0 390.0C588.5 387.5 587.2 383.7 589.0 380.0C590.8 376.3 594.5 371.0 597.0 368.0C599.5 365.0 603.8 365.0 604.0 362.0C604.2 359.0 601.2 353.2 598.0 350.0C594.8 346.8 588.3 342.3 585.0 343.0Z" fill="#e07d35"/>

<path d="M664.8 141.3C666.5 141.1 665.2 140.2 664.8 141.3C664.4 142.4 664.1 145.6 662.4 148.0C660.7 150.4 657.6 153.3 654.4 156.0C651.2 158.7 646.3 161.8 643.2 164.0C640.1 166.2 636.4 166.7 636.0 169.0C635.6 171.3 639.9 174.8 641.0 178.0C642.1 181.2 642.2 184.3 642.5 188.0C642.8 191.7 643.1 196.0 643.0 200.0C642.9 204.0 645.8 207.7 642.0 212.0C638.2 216.3 626.3 224.0 620.0 226.0C613.7 228.0 607.3 226.0 604.0 224.0C600.7 222.0 601.8 217.7 600.0 214.0C598.2 210.3 594.0 205.7 593.0 202.0C592.0 198.3 592.8 195.7 594.0 192.0C595.2 188.3 598.5 183.6 600.0 180.0C601.5 176.4 601.6 173.1 603.2 170.4C604.8 167.7 607.2 166.1 609.6 164.0C612.0 161.9 614.7 159.3 617.6 157.6C620.5 155.9 623.5 155.2 627.2 153.6C630.9 152.0 635.5 149.9 640.0 148.0C644.5 146.1 650.3 143.5 654.4 142.4C658.5 141.3 663.1 141.5 664.8 141.3Z" fill="#e07d35"/>

<path d="M639.0 174.0C640.3 172.0 646.7 168.7 650.0 167.0C653.3 165.3 654.3 164.3 659.0 164.0C663.7 163.7 671.5 164.3 678.0 165.0C684.5 165.7 694.3 167.0 698.0 168.0C701.7 169.0 702.3 169.7 700.0 171.0C697.7 172.3 690.3 174.5 684.0 176.0C677.7 177.5 669.0 179.5 662.0 180.0C655.0 180.5 645.8 180.0 642.0 179.0C638.2 178.0 637.7 176.0 639.0 174.0Z" fill="#e07d35"/>
<path d="M586.0 228.0C588.5 223.7 594.0 223.7 597.0 224.0C600.0 224.3 603.8 226.7 604.0 230.0C604.2 233.3 599.3 239.3 598.0 244.0C596.7 248.7 596.7 252.7 596.0 258.0C595.3 263.3 595.3 272.8 594.0 276.0C592.7 279.2 590.3 278.0 588.0 277.0C585.7 276.0 581.0 274.5 580.0 270.0C579.0 265.5 581.0 257.0 582.0 250.0C583.0 243.0 583.5 232.3 586.0 228.0Z" fill="#e07d35"/>
<path d="M604.0 222.0C606.7 217.7 609.0 214.3 612.0 214.0C615.0 213.7 617.3 216.3 622.0 220.0C626.7 223.7 633.7 229.8 640.0 236.0C646.3 242.2 655.3 252.0 660.0 257.0C664.7 262.0 665.3 262.5 668.0 266.0C670.7 269.5 673.7 274.7 676.0 278.0C678.3 281.3 683.0 285.0 682.0 286.0C681.0 287.0 675.3 284.3 670.0 284.0C664.7 283.7 656.7 283.3 650.0 284.0C643.3 284.7 636.3 286.2 630.0 288.0C623.7 289.8 615.7 294.7 612.0 295.0C608.3 295.3 610.2 293.5 608.0 290.0C605.8 286.5 601.2 279.7 599.0 274.0C596.8 268.3 595.5 261.7 595.0 256.0C594.5 250.3 594.5 245.7 596.0 240.0C597.5 234.3 601.3 226.3 604.0 222.0Z" fill="#ece9e1"/>
<path d="M607.0 296.0C608.5 293.9 608.2 295.3 612.0 293.6C615.8 291.9 623.7 287.8 630.0 286.0C636.3 284.2 643.3 283.2 650.0 282.6C656.7 282.0 664.5 282.0 670.0 282.6C675.5 283.2 680.0 283.8 683.0 286.0C686.0 288.2 685.5 292.0 688.0 296.0C690.5 300.0 694.7 305.3 698.0 310.0C701.3 314.7 705.0 320.3 708.0 324.0C711.0 327.7 716.3 329.3 716.0 332.0C715.7 334.7 709.0 337.3 706.0 340.0C703.0 342.7 701.0 346.2 698.0 348.0C695.0 349.8 690.7 351.3 688.0 351.0C685.3 350.7 684.3 348.2 682.0 346.0C679.7 343.8 676.7 340.2 674.0 338.0C671.3 335.8 669.3 334.3 666.0 333.0C662.7 331.7 658.0 329.5 654.0 330.0C650.0 330.5 645.3 334.3 642.0 336.0C638.7 337.7 636.7 337.7 634.0 340.0C631.3 342.3 629.0 345.5 626.0 350.0C623.0 354.5 619.7 364.8 616.0 367.0C612.3 369.2 607.7 365.2 604.0 363.0C600.3 360.8 597.0 357.2 594.0 354.0C591.0 350.8 587.5 346.5 586.0 344.0C584.5 341.5 584.3 341.0 585.0 339.0C585.7 337.0 587.8 335.2 590.0 332.0C592.2 328.8 595.8 324.3 598.0 320.0C600.2 315.7 601.5 310.0 603.0 306.0C604.5 302.0 605.5 298.1 607.0 296.0Z" fill="#5a5a5a"/>
<path d="M643 288.4L652.6 286.4L654.4 290.8L645.4 294Z M655.6 286.4L664.6 287.6L665 293L656.8 291.2Z" fill="#f4f4f4"/>
<path d="M667.0 257.0C667.0 254.7 670.2 250.8 672.0 250.0C673.8 249.2 676.2 250.0 678.0 252.0C679.8 254.0 682.7 259.5 683.0 262.0C683.3 264.5 681.8 266.7 680.0 267.0C678.2 267.3 674.2 265.7 672.0 264.0C669.8 262.3 667.0 259.3 667.0 257.0Z" fill="#e07d35"/>
<path d="M620.0 218.0C622.0 214.5 624.7 212.5 628.0 211.0C631.3 209.5 636.0 208.7 640.0 209.0C644.0 209.3 648.7 211.2 652.0 213.0C655.3 214.8 658.0 217.2 660.0 220.0C662.0 222.8 663.2 226.7 664.0 230.0C664.8 233.3 663.7 237.0 665.0 240.0C666.3 243.0 671.0 245.7 672.0 248.0C673.0 250.3 673.0 252.5 671.0 254.0C669.0 255.5 662.5 257.3 660.0 257.0C657.5 256.7 659.0 252.5 656.0 252.0C653.0 251.5 646.3 254.3 642.0 254.0C637.7 253.7 633.7 252.3 630.0 250.0C626.3 247.7 622.3 243.0 620.0 240.0C617.7 237.0 616.0 235.7 616.0 232.0C616.0 228.3 618.0 221.5 620.0 218.0Z" fill="#e02219"/>

<path d="M554.0 210.0C557.7 210.0 562.3 212.3 566.0 214.0C569.7 215.7 573.3 217.7 576.0 220.0C578.7 222.3 580.7 224.7 582.0 228.0C583.3 231.3 583.2 236.3 584.0 240.0C584.8 243.7 587.0 247.0 587.0 250.0C587.0 253.0 585.5 255.0 584.0 258.0C582.5 261.0 580.3 265.5 578.0 268.0C575.7 270.5 572.3 273.0 570.0 273.0C567.7 273.0 566.7 269.8 564.0 268.0C561.3 266.2 556.7 263.3 554.0 262.0C551.3 260.7 550.3 262.3 548.0 260.0C545.7 257.7 542.0 252.0 540.0 248.0C538.0 244.0 536.5 240.3 536.0 236.0C535.5 231.7 535.7 225.7 537.0 222.0C538.3 218.3 541.2 216.0 544.0 214.0C546.8 212.0 550.3 210.0 554.0 210.0Z" fill="#e02219"/>
<path d="M482.0 178.0C484.3 176.3 487.0 175.6 490.0 175.6C493.0 175.6 496.0 176.3 500.0 178.0C504.0 179.7 510.0 183.8 514.0 186.0C518.0 188.2 521.3 189.0 524.0 191.0C526.7 193.0 529.3 195.2 530.0 198.0C530.7 200.8 530.0 203.7 528.0 208.0C526.0 212.3 521.3 220.5 518.0 224.0C514.7 227.5 513.0 228.3 508.0 229.0C503.0 229.7 494.7 229.0 488.0 228.0C481.3 227.0 472.2 225.0 468.0 223.0C463.8 221.0 463.0 219.8 463.0 216.0C463.0 212.2 465.8 205.0 468.0 200.0C470.2 195.0 473.7 189.7 476.0 186.0C478.3 182.3 479.7 179.7 482.0 178.0Z" fill="#ee1ab5"/>
<path d="M500.0 249.0C503.3 248.3 506.2 248.8 508.0 250.0C509.8 251.2 510.0 252.7 511.0 256.0C512.0 259.3 512.8 266.0 514.0 270.0C515.2 274.0 517.0 276.3 518.0 280.0C519.0 283.7 520.7 288.7 520.0 292.0C519.3 295.3 517.3 297.7 514.0 300.0C510.7 302.3 504.3 304.3 500.0 306.0C495.7 307.7 491.7 310.3 488.0 310.0C484.3 309.7 481.3 307.0 478.0 304.0C474.7 301.0 470.7 296.0 468.0 292.0C465.3 288.0 463.2 283.3 462.0 280.0C460.8 276.7 460.7 274.7 461.0 272.0C461.3 269.3 462.2 266.2 464.0 264.0C465.8 261.8 468.0 260.7 472.0 259.0C476.0 257.3 483.3 255.7 488.0 254.0C492.7 252.3 496.7 249.7 500.0 249.0Z" fill="#ee1ab5"/>
<ellipse cx="482.5" cy="288" rx="6.2" ry="6" fill="#fff"/>
<ellipse cx="485.5" cy="299" rx="6.6" ry="6.2" fill="#fff"/>
<ellipse cx="498.5" cy="282" rx="6.4" ry="6" fill="#fff"/>
<ellipse cx="502" cy="294" rx="6.2" ry="6.2" fill="#fff"/></g>
<path d="M316 17V29.5M318.8 17V29.5" stroke="#8a8a8a" stroke-width="0.8" fill="none"/>
<g stroke="#858585" fill="none" stroke-width="0.8" stroke-linejoin="round"><path d="M344.5 24.5V41.5C344.5 45.8 360.5 45.8 360.5 41.5V24.5" fill="#3e3e3e"/><ellipse cx="352.5" cy="24.5" rx="8" ry="3.2" fill="#7d7d7d"/><path d="M344.5 30C346 33.6 359 33.6 360.5 30M344.5 38C346 41.6 359 41.6 360.5 38"/><path d="M353 21L361 15.6L360.6 23.5" fill="#3a3a3a"/><circle cx="355.4" cy="25.4" r="0.8" fill="#ddd" stroke="none"/></g>
<g stroke="#858585" fill="none" stroke-width="0.8" stroke-linejoin="round"><path d="M379.4 5.5C377.6 10 375.6 15 375.6 18.6L377 22.6H382.4L383.8 18.6C383.8 15 381.2 10 379.4 5.5Z"/><path d="M379.6 9V19" stroke-width="1.1"/><rect x="376.2" y="23" width="7.4" height="7" fill="#777"/><path d="M375.4 30.4H384.4V45.5H375.4Z"/><path d="M375.4 43H384.4" stroke-width="1.4"/></g>
<defs><linearGradient id="bt" x1="0" x2="1"><stop offset="0" stop-color="#8e5f22"/><stop offset="0.5" stop-color="#c0883a"/><stop offset="1" stop-color="#8e5f22"/></linearGradient><linearGradient id="bb" x1="0" x2="1"><stop offset="0" stop-color="#101010"/><stop offset="0.55" stop-color="#2a3242"/><stop offset="1" stop-color="#101010"/></linearGradient></defs>
<path d="M406.2 4.6C404.6 10 402.8 18 402.6 26.4H409.9C409.7 18 407.8 10 406.2 4.6Z" fill="url(#bt)"/>
<rect x="402.6" y="26.4" width="7.3" height="14.8" fill="url(#bb)"/>
<rect x="402.4" y="41.2" width="7.7" height="4.8" fill="#d9c589"/><path d="M402.4 43.2H410.1" stroke="#8a7a4a" stroke-width="0.6"/>
<g stroke="#858585" fill="none" stroke-width="0.8" stroke-linejoin="round"><path d="M426.6 27H439.8V45.5H426.6Z"/><path d="M431.6 5.2L435 7.6V12H436.4V17H437.4V22H438.4V26.8H428V22H429V17H430V12H431.4Z" fill="#8e8e8e"/><path d="M431.6 13.5H435.4M430.6 18.5H436.4M429.6 23.2H437.4" stroke="#444" stroke-width="0.8"/></g>
<g stroke="#858585" fill="none" stroke-width="0.8" stroke-linejoin="round"><path d="M459.7 4.6L456.2 23.6V45.5H463.5V23.6Z"/><path d="M456.2 23.6H463.5M459.7 8V23.6" stroke-width="0.7"/></g>
<g stroke="#858585" fill="none" stroke-width="0.8" stroke-linejoin="round"><path d="M478.8 27.6V20.6H490.4C493.6 20.6 495.4 23 495.4 27.6Z" fill="#9a9a9a"/><path d="M478.8 27.6H495.4V45.5H478.8Z"/><path d="M482.2 27.6V45.5"/></g>
<path d="M519.6 20V25.8M520 22.9H531M528 19.8L531.4 22.9L528 26" stroke="#bbb" stroke-width="1" fill="none"/>
<path d="M16.2 15.5H29.2M22.7 9.0V22.0" stroke="#fff" stroke-width="1.3" fill="none"/>
<g transform="translate(51.8 9.3)" stroke="#fff" fill="none" stroke-width="1.2" stroke-linecap="round" stroke-linejoin="round"><path d="M3.2 10.2H0.6V0.6H5.2L7.6 3"/><path d="M3.4 2.6H8.6L11.8 5.8V12H3.4Z"/><path d="M8.4 2.8V6H11.6"/></g>
<g transform="translate(93.4 16.0)" stroke="#fff" fill="none" stroke-width="1.2" stroke-linecap="round" stroke-linejoin="round"><path d="M4.6 -3.6A5.8 5.8 0 1 0 5.8 0.4"/><path d="M5.6 -6V-3.2H2.8"/><path d="M-0.4 -3V0.6L2.4 2"/></g>
<g transform="translate(128.4 15.5)" stroke="#fff" fill="none" stroke-width="1.2" stroke-linecap="round" stroke-linejoin="round"><path d="M-5.4 -4H5.4"/><path d="M-2 -4V-5.8H2V-4"/><path d="M-4.2 -4V6H4.2V-4"/><rect x="-2.2" y="-2" width="4.4" height="6" fill="#aaa" stroke="none"/></g>
<path d="M145.8 40.2L148 38L150.2 40.2" stroke="#666" stroke-width="0.9" fill="none"/>
<path d="M145.8 434L148 436.2L150.2 434" stroke="#666" stroke-width="0.9" fill="none"/>
<path d="M963.8 5.6L966 3.4L968.2 5.6" stroke="#999" stroke-width="0.9" fill="none"/>
<path d="M963.8 463.6L966 465.8L968.2 463.6" stroke="#999" stroke-width="0.9" fill="none"/>
<g transform="translate(207.3 117.0)"><path d="M-7.2 0C-4 -6.6 4 -6.6 7.2 0C4 6.6 -4 6.6 -7.2 0Z" fill="#fff"/><circle r="3.2" fill="#323232"/><circle r="1.7" fill="#fff"/></g>
<g transform="translate(242.5 116.5)" stroke="#fff" fill="none" stroke-width="1.2" stroke-linecap="round" stroke-linejoin="round" stroke-width="1.1"><rect x="-6.4" y="-4.8" width="12.8" height="9.6"/><path d="M-6 3L-2.2 -1.6L1.4 2.2L3 0.6L6 3.6"/><circle cx="3.4" cy="-2.4" r="0.5"/></g>
<g transform="translate(277.6 116.1)" stroke="#fff" fill="none" stroke-width="1.2" stroke-linecap="round" stroke-linejoin="round"><path d="M-5.4 -4H5.4"/><path d="M-2 -4V-5.8H2V-4"/><path d="M-4.2 -4V6H4.2V-4"/><rect x="-2.2" y="-2" width="4.4" height="6" fill="#aaa" stroke="none"/></g>
<g transform="translate(207.3 249.0)"><path d="M-7.2 0C-4 -6.6 4 -6.6 7.2 0C4 6.6 -4 6.6 -7.2 0Z" fill="#fff"/><circle r="3.2" fill="#323232"/><circle r="1.7" fill="#fff"/></g>
<g transform="translate(242.5 248.5)" stroke="#fff" fill="none" stroke-width="1.2" stroke-linecap="round" stroke-linejoin="round" stroke-width="1.1"><rect x="-6.4" y="-4.8" width="12.8" height="9.6"/><path d="M-6 3L-2.2 -1.6L1.4 2.2L3 0.6L6 3.6"/><circle cx="3.4" cy="-2.4" r="0.5"/></g>
<g transform="translate(277.6 248.1)" stroke="#fff" fill="none" stroke-width="1.2" stroke-linecap="round" stroke-linejoin="round"><path d="M-5.4 -4H5.4"/><path d="M-2 -4V-5.8H2V-4"/><path d="M-4.2 -4V6H4.2V-4"/><rect x="-2.2" y="-2" width="4.4" height="6" fill="#aaa" stroke="none"/></g>
<g transform="translate(207.3 380.5)"><path d="M-7.2 0C-4 -6.6 4 -6.6 7.2 0C4 6.6 -4 6.6 -7.2 0Z" fill="#fff"/><circle r="3.2" fill="#323232"/><circle r="1.7" fill="#fff"/></g>
<g transform="translate(242.5 380.0)" stroke="#fff" fill="none" stroke-width="1.2" stroke-linecap="round" stroke-linejoin="round" stroke-width="1.1"><rect x="-6.4" y="-4.8" width="12.8" height="9.6"/><path d="M-6 3L-2.2 -1.6L1.4 2.2L3 0.6L6 3.6"/><circle cx="3.4" cy="-2.4" r="0.5"/></g>
<g transform="translate(277.6 379.6)" stroke="#fff" fill="none" stroke-width="1.2" stroke-linecap="round" stroke-linejoin="round"><path d="M-5.4 -4H5.4"/><path d="M-2 -4V-5.8H2V-4"/><path d="M-4.2 -4V6H4.2V-4"/><rect x="-2.2" y="-2" width="4.4" height="6" fill="#aaa" stroke="none"/></g>
<g transform="translate(177.3 186.5) rotate(45)" stroke="#e3ab30" fill="none" stroke-width="1.1" stroke-linejoin="round"><path d="M-1.7 -7.2H1.7V4.2L0 7.4L-1.7 4.2Z"/><path d="M-1.7 -4.9H1.7"/></g>
<g stroke="#fff" fill="none" stroke-width="1.2"><rect x="19.8" y="479.2" width="11" height="11"/><path d="M25.3 479.2V490.2M19.8 484.7H30.8"/></g>
<g stroke="#fff" fill="none" stroke-width="1.1" stroke-linejoin="round"><path d="M72 479.4L78 482.4L72 485.4L66 482.4Z"/><path d="M66.6 485L72 487.8L77.4 485M66.6 487.6L72 490.4L77.4 487.6"/></g>
<text x="77.4" y="477.7" font-size="7" font-weight="bold" fill="#e8b33a" font-family="Liberation Sans, sans-serif">L1</text>
<g transform="translate(118.8 485)" stroke="#fff" fill="none" stroke-width="1" stroke-linejoin="round"><path d="M4.77 -1.10L6.43 -0.96L6.43 0.96L4.77 1.10L4.16 2.60L5.23 3.87L3.87 5.23L2.60 4.16L1.10 4.77L0.96 6.43L-0.96 6.43L-1.10 4.77L-2.60 4.16L-3.87 5.23L-5.23 3.87L-4.16 2.60L-4.77 1.10L-6.43 0.96L-6.43 -0.96L-4.77 -1.10L-4.16 -2.60L-5.23 -3.87L-3.87 -5.23L-2.60 -4.16L-1.10 -4.77L-0.96 -6.43L0.96 -6.43L1.10 -4.77L2.60 -4.16L3.87 -5.23L5.23 -3.87L4.16 -2.60 Z"/><circle r="2.3"/></g>
<g transform="translate(168.5 485)"><path d="M0 -6A4.4 4.4 0 0 1 2.6 1.6V3.6H-2.6V1.6A4.4 4.4 0 0 1 0 -6Z" fill="#f2c230"/><rect x="-1.9" y="4.2" width="3.8" height="2.2" rx="0.8" fill="#f2c230"/><path d="M-1.2 -1.4L0 0.2L1.2 -1.4M0 0.2V3" stroke="#fff" stroke-width="0.7" fill="none"/></g>
<path d="M151 458.6V467.6L153.2 465.6L154.8 469L156 468.4L154.4 465.2H157.2Z" fill="#fff" stroke="#222" stroke-width="0.5"/>
<path d="M359.1 480.4V490" stroke="#fff" stroke-width="1.3"/><path d="M368.4 481.3L362.4 485.3L368.4 489.3Z" stroke="#fff" stroke-width="1.2" fill="none" stroke-linejoin="miter"/>
<path d="M396.8 479.3L390.8 485.3L396.8 491.3" stroke="#fff" stroke-width="1.3" fill="none"/>
<path d="M427.5 481.0L420.3 485.3L427.5 489.6Z" stroke="#fff" stroke-width="1.2" fill="none" stroke-linejoin="miter"/>
<path d="M512.6 481.0L519.8 485.3L512.6 489.6Z" stroke="#fff" stroke-width="1.2" fill="none" stroke-linejoin="miter"/>
<path d="M542.9 479.3L548.9 485.3L542.9 491.3" stroke="#fff" stroke-width="1.3" fill="none"/>
<path d="M571.3 481.3L577.3 485.3L571.3 489.3Z" stroke="#fff" stroke-width="1.2" fill="none" stroke-linejoin="miter"/><path d="M580.5 480.4V490" stroke="#fff" stroke-width="1.3"/>
<path d="M469.2 475V495" stroke="#777" stroke-width="0.8"/>
<path d="M756.7 485.0H769.7M763.2 478.5V491.5" stroke="#fff" stroke-width="1.3" fill="none"/>
<g transform="translate(807.3 478.8)" stroke="#fff" fill="none" stroke-width="1.2" stroke-linecap="round" stroke-linejoin="round"><path d="M3.2 10.2H0.6V0.6H5.2L7.6 3"/><path d="M3.4 2.6H8.6L11.8 5.8V12H3.4Z"/><path d="M8.4 2.8V6H11.6"/></g>
<g transform="translate(863.9 485.4)" stroke="#fff" fill="none" stroke-width="1.2" stroke-linecap="round" stroke-linejoin="round"><path d="M4.6 -3.6A5.8 5.8 0 1 0 5.8 0.4"/><path d="M5.6 -6V-3.2H2.8"/><path d="M-0.4 -3V0.6L2.4 2"/></g>
<g transform="translate(913.9 485.0)" stroke="#fff" fill="none" stroke-width="1.2" stroke-linecap="round" stroke-linejoin="round"><path d="M-5.4 -4H5.4"/><path d="M-2 -4V-5.8H2V-4"/><path d="M-4.2 -4V6H4.2V-4"/><rect x="-2.2" y="-2" width="4.4" height="6" fill="#aaa" stroke="none"/></g>
<g fill="#fff"><circle cx="950.5" cy="485.5" r="0.8"/><circle cx="954.7" cy="485.5" r="0.8"/><circle cx="958.9" cy="485.5" r="0.8"/></g>
<path d="M909.0 436.0L902.5 442.4L909.0 448.8" stroke="#fff" stroke-width="1.3" fill="none"/>
<path d="M936.0 436.0L942.5 442.4L936.0 448.8" stroke="#fff" stroke-width="1.3" fill="none"/>
<path d="M923.5 434V450" stroke="#555" stroke-width="0.8"/>
</svg>
</body></html>
